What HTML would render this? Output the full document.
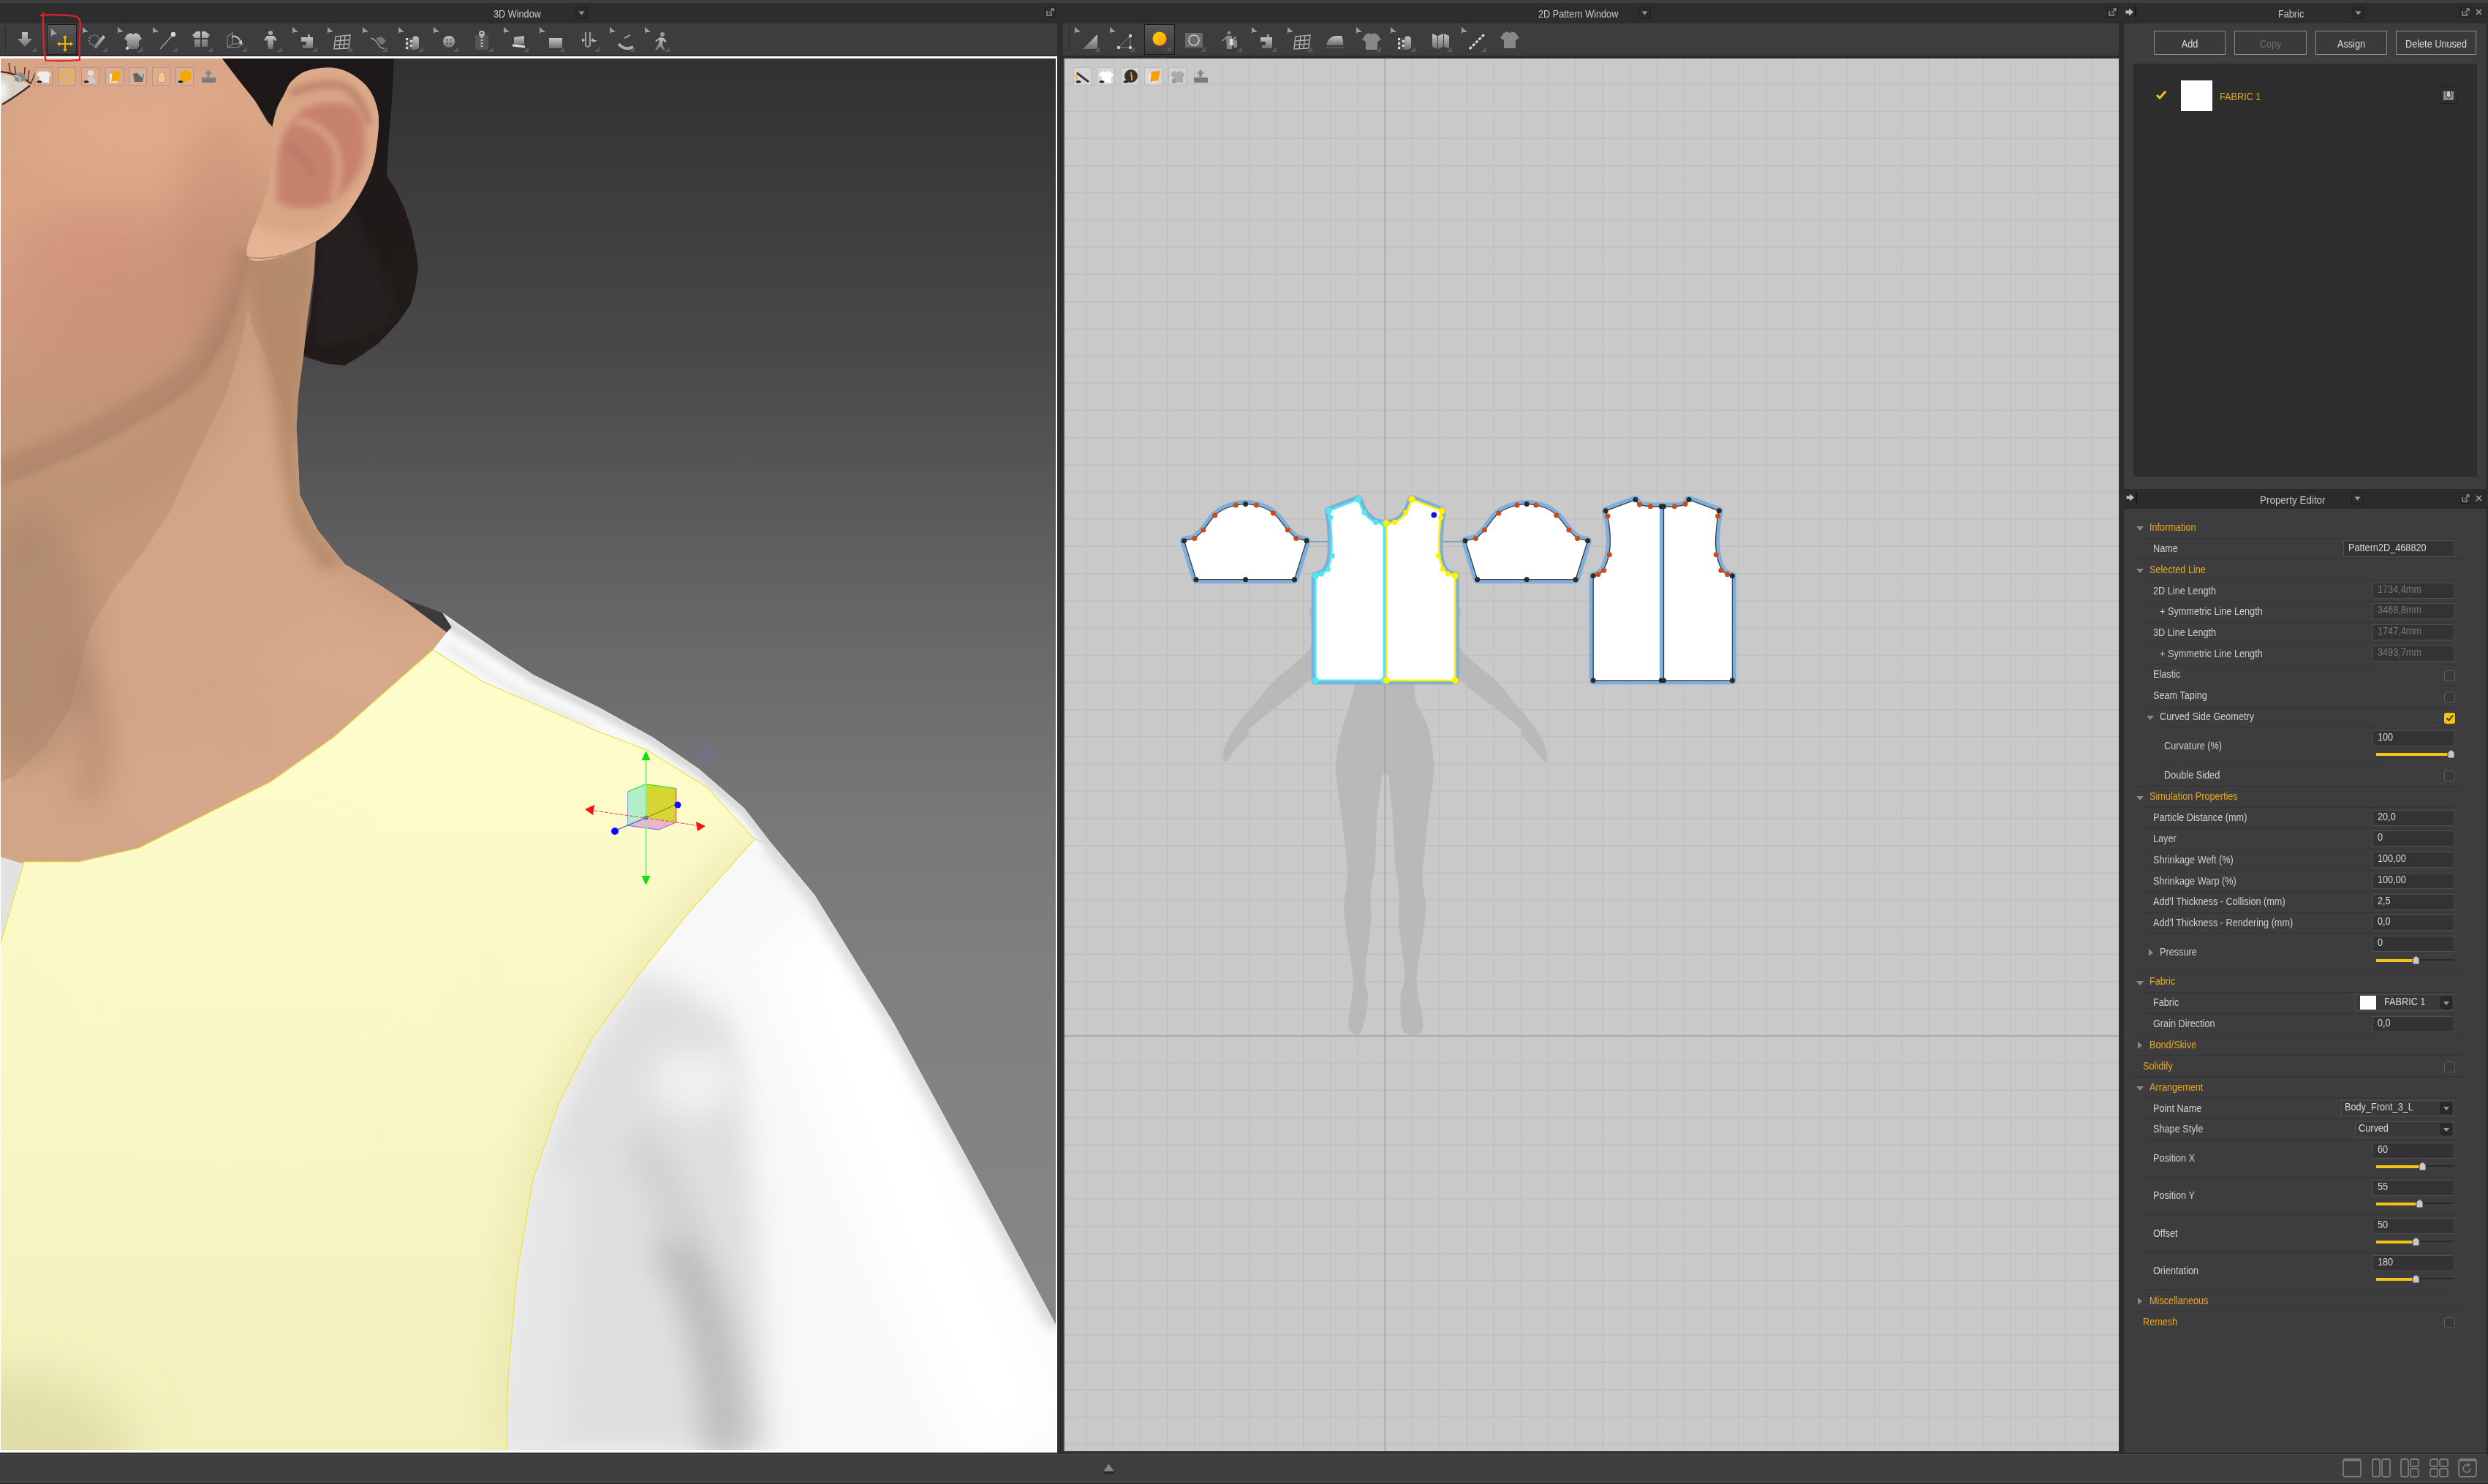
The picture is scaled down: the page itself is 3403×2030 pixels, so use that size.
<!DOCTYPE html>
<html><head><meta charset="utf-8">
<style>
*{box-sizing:border-box}
html,body{margin:0;padding:0;background:#3e3e40}
body{width:3403px;height:2030px;position:relative;overflow:hidden;background:#3e3e40;font-family:"Liberation Sans",sans-serif;color:#d0d0d0}
.a{position:absolute}
.t{position:absolute;white-space:nowrap;line-height:1}
</style></head><body>
<!-- top strip + title bar -->
<div class="a" style="left:0;top:0;width:3403px;height:4px;background:#3e3e40"></div>
<div class="a" style="left:0;top:4px;width:3403px;height:28px;background:#2d2d2d"></div>
<!-- toolbars -->
<div class="a" style="left:0;top:32px;width:1446px;height:44px;background:#3d3d3f"></div>
<div class="a" style="left:1446px;top:32px;width:8px;height:1958px;background:#2d2d2d"></div>
<div class="a" style="left:1454px;top:32px;width:1447px;height:44px;background:#3d3d3f"></div>
<div class="a" style="left:2898px;top:32px;width:7px;height:1958px;background:#2d2d2d"></div>
<div class="a" style="left:0;top:76px;width:1446px;height:1px;background:#1a1a1a"></div>
<div class="a" style="left:1454px;top:76px;width:1444px;height:4px;background:#2d2d2d"></div>
<!-- status bar -->
<div class="a" style="left:0;top:1987px;width:3403px;height:2px;background:#2e2e30"></div>
<div class="a" style="left:0;top:1989px;width:3403px;height:1px;background:#4a4a4a"></div>
<div class="a" style="left:0;top:2026px;width:3403px;height:2px;background:#484848"></div>
<div class="a" style="left:0;top:2028px;width:3403px;height:2px;background:#2e2e30"></div>

<!--3D-->
<div id="v3d" class="a" style="left:0;top:77px;width:1446px;height:1910px;background:#fff;overflow:hidden">
<svg class="a" style="left:1px;top:3px" width="1443" height="1904" viewBox="1 80 1443 1904">
<defs>
<linearGradient id="bg3" x1="0" y1="80" x2="0" y2="1984" gradientUnits="userSpaceOnUse">
<stop offset="0" stop-color="#313133"/><stop offset="0.22" stop-color="#4a4a4c"/><stop offset="0.40" stop-color="#666668"/><stop offset="0.536" stop-color="#77777a"/><stop offset="0.667" stop-color="#808083"/><stop offset="0.85" stop-color="#858588"/><stop offset="1" stop-color="#88888a"/></linearGradient>
<linearGradient id="face" x1="0" y1="100" x2="250" y2="640" gradientUnits="userSpaceOnUse">
<stop offset="0" stop-color="#d6a486"/><stop offset="0.3" stop-color="#daa486"/><stop offset="0.7" stop-color="#c6967a"/><stop offset="1" stop-color="#c29474"/></linearGradient>
<linearGradient id="neck" x1="0" y1="560" x2="600" y2="1000" gradientUnits="userSpaceOnUse">
<stop offset="0" stop-color="#bf9577"/><stop offset="0.45" stop-color="#c6997b"/><stop offset="1" stop-color="#d0a084"/></linearGradient>
<linearGradient id="yel" x1="0" y1="880" x2="0" y2="1984" gradientUnits="userSpaceOnUse">
<stop offset="0" stop-color="#fefdcc"/><stop offset="0.5" stop-color="#f9f7c4"/><stop offset="1" stop-color="#f2f0bc"/></linearGradient>
<linearGradient id="hairg" x1="0" y1="80" x2="0" y2="500" gradientUnits="userSpaceOnUse">
<stop offset="0" stop-color="#1c1817"/><stop offset="1" stop-color="#221c1a"/></linearGradient>
<filter id="bl20" filterUnits="userSpaceOnUse" x="0" y="0" width="1500" height="2100"><feGaussianBlur stdDeviation="20"/></filter>
<filter id="bl40" filterUnits="userSpaceOnUse" x="0" y="0" width="1500" height="2100"><feGaussianBlur stdDeviation="40"/></filter>
<filter id="bl8" filterUnits="userSpaceOnUse" x="0" y="0" width="1500" height="2100"><feGaussianBlur stdDeviation="8"/></filter>
<filter id="bl4" filterUnits="userSpaceOnUse" x="0" y="0" width="1500" height="2100"><feGaussianBlur stdDeviation="4"/></filter>
</defs>
<rect x="1" y="80" width="1443" height="1904" fill="url(#bg3)"/>
<path d="M296.0,78.0 L539.0,78.0 L536.0,137.6 L531.0,200.0 L529.0,241.0 L540.0,257.0 L554.0,287.0 L563.0,314.5 L570.0,349.0 L572.0,365.0 L567.8,394.6 L561.0,417.5 L545.0,440.4 L517.4,470.0 L494.5,486.0 L471.6,500.0 L448.7,497.7 L425.8,490.8 L412.0,486.0 L423.5,440.4 L430.0,383.0 L432.7,330.5 L380.0,300.0 L372.4,173.4 L348.5,137.6 L325.0,108.0Z" fill="url(#hairg)"/>
<path d="M440,240 Q500,300 540,420 Q520,470 430,470 Z" fill="#2b2828" opacity="0.5" filter="url(#bl8)"/>
<path d="M560,380 Q520,420 440,430 M566,350 Q520,395 445,405 M550,430 Q500,465 430,465" stroke="#2e2522" stroke-width="1.5" fill="none" opacity="0.6"/>
<clipPath id="cpSkin"><path d="M1.0,78.0 L302.0,78.0 L325.0,108.0 L348.5,137.6 L366.0,167.0 L372.4,173.4 L380.0,300.0 L432.0,328.0 L429.0,376.0 L420.0,440.0 L415.0,488.0 L408.0,540.0 L405.6,583.0 L410.0,677.0 L434.0,724.6 L471.7,771.7 L519.0,800.0 L548.0,819.0 L605.0,838.0 L618.0,858.0 L611.0,865.0 L592.0,889.0 L457.0,1008.0 L371.0,1069.0 L190.0,1160.0 L108.0,1179.0 L30.0,1181.0 L1.0,1172.0Z"/></clipPath>
<g clip-path="url(#cpSkin)">
<rect x="1" y="78" width="640" height="1110" fill="url(#neck)"/>
<path d="M339.6,418.0 L330.0,470.0 L311.0,535.8 L264.0,630.0 L232.8,700.0 L194.0,758.0 L155.0,806.7 L122.9,861.7 L106.7,926.0 L97.0,968.0 L64.7,1017.0 L19.4,1062.0 L1.0,1068.6 L1.0,1190.0 L640.0,1190.0 L640.0,640.0 L401.0,606.0 L372.5,512.0 L344.0,441.5Z" fill="#d6a78a" opacity="0.8"/>
<path d="M432,328 L429,376 L420,440 L415,488 L408,540 L405.6,583 L410,677 L434,724.6 L471.7,771.7 L440,780 L400,720 L385,640 L375,560 L360,480 L345,400 L340,340 Z" fill="#b08868" opacity="0.75" filter="url(#bl8)"/>
<ellipse cx="470" cy="930" rx="120" ry="80" fill="#dcac90" opacity="0.5" filter="url(#bl40)"/>
<ellipse cx="300" cy="1080" rx="200" ry="70" fill="#d8aa8e" opacity="0.5" filter="url(#bl40)"/>
<path d="M1,670 L126,640 L251,550 L320,430 L350,430 L320,560 L250,660 L120,720 L1,760 Z" fill="#ad866c" opacity="0.25" filter="url(#bl20)"/>
<path d="M100,900 Q125,960 132,1000 Q130,1050 118,1095" stroke="#9c765e" stroke-width="30" fill="none" opacity="0.55" filter="url(#bl20)"/>
<ellipse cx="40" cy="880" rx="90" ry="170" fill="#a08068" opacity="0.45" filter="url(#bl20)"/>
<path d="M380,400 Q400,600 470,760 Q520,810 560,820" stroke="#b3876c" stroke-width="30" fill="none" opacity="0.35" filter="url(#bl20)"/>
<path d="M1.0,78.0 C51.2,78.0 248.0,73.0 302.0,78.0 C356.0,83.0 317.2,98.1 325.0,108.0 C332.8,117.9 341.7,127.8 348.5,137.6 C355.3,147.4 362.0,161.0 366.0,167.0 C370.0,173.0 371.3,165.9 372.4,173.4 C373.5,180.9 373.4,198.1 372.4,212.0 C371.4,225.9 369.4,243.4 366.4,256.8 C363.4,270.2 359.0,280.1 354.5,292.5 C350.0,304.9 342.6,321.4 339.6,331.3 C336.6,341.2 338.5,342.2 336.6,352.0 C334.7,361.8 332.1,375.3 328.0,390.0 C323.9,404.7 317.8,425.0 312.0,440.0 C306.2,455.0 300.0,467.5 293.0,480.0 C286.0,492.5 280.8,503.5 270.0,515.0 C259.2,526.5 244.7,537.7 228.0,549.0 C211.3,560.3 189.2,572.2 170.0,583.0 C150.8,593.8 131.9,604.8 113.0,613.6 C94.1,622.4 75.3,628.3 56.6,636.0 C37.9,643.7 10.3,656.0 1.0,660.0Z" fill="url(#face)"/>
<ellipse cx="150" cy="380" rx="140" ry="120" fill="#d08c78" opacity="0.45" filter="url(#bl40)"/>
<ellipse cx="210" cy="190" rx="170" ry="90" fill="#e6ae90" opacity="0.55" filter="url(#bl40)"/>
<path d="M332.6,338.0 C331.2,344.3 328.1,361.3 324.0,376.0 C319.9,390.7 313.8,411.0 308.0,426.0 C302.2,441.0 296.0,453.5 289.0,466.0 C282.0,478.5 276.8,489.5 266.0,501.0 C255.2,512.5 240.7,523.7 224.0,535.0 C207.3,546.3 185.2,558.2 166.0,569.0 C146.8,579.8 127.9,590.8 109.0,599.6 C90.1,608.4 71.3,614.3 52.6,622.0 C33.9,629.7 6.3,642.0 -3.0,646.0" stroke="#a07a60" stroke-width="30" fill="none" opacity="0.45" filter="url(#bl8)"/>
<path d="M336.6,352.0 C335.2,358.3 332.1,375.3 328.0,390.0 C323.9,404.7 317.8,425.0 312.0,440.0 C306.2,455.0 300.0,467.5 293.0,480.0 C286.0,492.5 280.8,503.5 270.0,515.0 C259.2,526.5 244.7,537.7 228.0,549.0 C211.3,560.3 189.2,572.2 170.0,583.0 C150.8,593.8 131.9,604.8 113.0,613.6 C94.1,622.4 75.3,628.3 56.6,636.0 C37.9,643.7 10.3,656.0 1.0,660.0" stroke="#8a6650" stroke-width="3" fill="none" opacity="0.6" filter="url(#bl4)"/>
<ellipse cx="300" cy="300" rx="60" ry="140" fill="#c08a70" opacity="0.35" filter="url(#bl20)"/>
</g>
<clipPath id="cpEar"><path d="M372.4,173.0 C373.4,169.1 375.8,156.4 378.3,149.5 C380.8,142.6 383.8,138.0 387.3,131.6 C390.8,125.1 393.2,116.8 399.2,110.8 C405.1,104.8 412.1,98.6 423.0,95.9 C433.9,93.2 451.8,90.9 464.7,94.4 C477.6,97.9 491.8,107.0 500.5,116.7 C509.2,126.4 514.4,139.1 516.9,152.5 C519.4,165.9 517.1,183.3 515.4,197.2 C513.7,211.1 511.0,223.6 506.5,236.0 C502.0,248.4 495.6,260.3 488.6,271.7 C481.6,283.1 473.6,295.1 464.7,304.5 C455.8,313.9 445.9,321.4 435.0,328.3 C424.1,335.2 412.1,341.5 399.2,346.2 C386.3,350.9 367.4,355.6 357.5,356.6 C347.6,357.6 342.6,356.3 339.6,352.1 C336.6,347.9 337.1,341.2 339.6,331.3 C342.1,321.4 350.0,304.9 354.5,292.5 C359.0,280.1 363.4,270.2 366.4,256.8 C369.4,243.4 371.4,219.5 372.4,212.0Z"/></clipPath>
<path d="M372.4,173.0 C373.4,169.1 375.8,156.4 378.3,149.5 C380.8,142.6 383.8,138.0 387.3,131.6 C390.8,125.1 393.2,116.8 399.2,110.8 C405.1,104.8 412.1,98.6 423.0,95.9 C433.9,93.2 451.8,90.9 464.7,94.4 C477.6,97.9 491.8,107.0 500.5,116.7 C509.2,126.4 514.4,139.1 516.9,152.5 C519.4,165.9 517.1,183.3 515.4,197.2 C513.7,211.1 511.0,223.6 506.5,236.0 C502.0,248.4 495.6,260.3 488.6,271.7 C481.6,283.1 473.6,295.1 464.7,304.5 C455.8,313.9 445.9,321.4 435.0,328.3 C424.1,335.2 412.1,341.5 399.2,346.2 C386.3,350.9 367.4,355.6 357.5,356.6 C347.6,357.6 342.6,356.3 339.6,352.1 C336.6,347.9 337.1,341.2 339.6,331.3 C342.1,321.4 350.0,304.9 354.5,292.5 C359.0,280.1 363.4,270.2 366.4,256.8 C369.4,243.4 371.4,219.5 372.4,212.0Z" fill="#d8a585"/>
<g clip-path="url(#cpEar)">
<path d="M338,300 Q380,330 430,318 Q470,300 500,250 L530,260 L530,380 L320,380 Z" fill="#e4b494" filter="url(#bl8)"/>
<path d="M380,215 Q385,175 415,150 Q455,130 490,150 Q505,185 495,225 Q480,262 445,280 Q405,292 378,275 Z" fill="#c7826e" filter="url(#bl4)"/>
<path d="M398,128 Q440,110 470,118 Q497,135 505,170" stroke="#b97a68" stroke-width="10" fill="none" opacity="0.8" filter="url(#bl4)"/>
<path d="M405,165 Q445,170 460,205 Q468,240 455,270" stroke="#dba88a" stroke-width="9" fill="none" opacity="0.85" filter="url(#bl4)"/>
<path d="M392,200 Q420,210 428,245" stroke="#b47262" stroke-width="8" fill="none" opacity="0.6" filter="url(#bl4)"/>
<path d="M385,112 Q430,92 475,100 Q512,120 518,170 Q518,230 495,270 Q465,312 425,330" stroke="#deac8e" stroke-width="9" fill="none" filter="url(#bl4)"/>
</g>
<path d="M338,352 Q380,358 430,332" stroke="#9a6e58" stroke-width="1.5" fill="none" opacity="0.6"/>
<path d="M1,100 L16,104 L41,116 L31,127 L16,137 L1,144 Z" fill="#d8d0c6"/>
<ellipse cx="3" cy="125" rx="6" ry="14" fill="#ffffff" opacity="0.9" filter="url(#bl4)"/>
<path d="M1,98 Q25,100 42,114" stroke="#3a2420" stroke-width="2" fill="none"/>
<path d="M3,143 Q25,130 41,117" stroke="#4a2a24" stroke-width="2.5" fill="none"/>
<path d="M12,86 L14,100 M20,90 L22,103 M34,92 L33,108 M40,96 L38,111 M48,100 L42,115" stroke="#4a3028" stroke-width="1.4"/>
<path d="M520,797 L548,818 L605,838 L618,858 L611,865 Z" fill="#3b3b3d"/>
<clipPath id="cpWhite"><path d="M605.0,838.0 L684.0,893.0 L729.5,923.0 L820.0,968.0 L893.6,1009.0 L956.0,1051.7 L1018.0,1105.5 L1055.0,1153.6 L1114.0,1224.0 L1222.0,1399.0 L1329.5,1597.0 L1444.0,1812.0 L1444.0,1984.0 L692.5,1984.0 L695.0,1886.0 L706.6,1745.0 L729.0,1614.0 L763.0,1512.0 L808.5,1422.0 L871.0,1337.0 L939.0,1252.0 L1032.0,1148.0 L967.0,1077.0 L885.0,1026.0 L811.5,998.0 L726.6,961.0 L661.5,933.0 L592.0,889.0 L611.0,865.0 L618.0,858.0Z"/></clipPath>
<g clip-path="url(#cpWhite)">
<rect x="580" y="830" width="870" height="1160" fill="#f8f8f8"/>
<path d="M600,845 L684,897 L729,927 L820,972 L894,1013 L956,1056 L1018,1110 L1055,1158 L1114,1228 L1222,1403 L1330,1601 L1444,1816" stroke="#d6d6d6" stroke-width="12" fill="none" filter="url(#bl4)"/>
<path d="M610,884 L680,929 L730,958 L810,995" stroke="#e6e6e6" stroke-width="6" fill="none" filter="url(#bl4)"/>
<path d="M873,1330 L930,1352 L1000,1395 L1022,1547 L1036,1695 L1046,1843 L1056,1990 L680,1990 L695,1886 L707,1745 L729,1614 L763,1512 L808,1422 L850,1365 Z" fill="#dfdfdf" filter="url(#bl20)"/>
<ellipse cx="950" cy="1480" rx="60" ry="45" fill="#f0f0f0" filter="url(#bl20)"/>
<path d="M760,1600 Q740,1800 730,1990" stroke="#e8e8e8" stroke-width="60" fill="none" filter="url(#bl20)"/>
<path d="M915,1690 Q960,1760 975,1840 Q990,1910 995,1990" stroke="#bdbdbd" stroke-width="62" fill="none" filter="url(#bl20)"/>
<path d="M870,1560 Q920,1620 935,1700" stroke="#d0d0d0" stroke-width="50" fill="none" filter="url(#bl20)"/>
<path d="M1120,1260 Q1230,1600 1400,1990" stroke="#ffffff" stroke-width="170" fill="none" filter="url(#bl40)"/>
<path d="M1055,1153.6 L1114,1224 L1222,1399 L1329.5,1597 L1444,1812" stroke="#dedede" stroke-width="26" fill="none" filter="url(#bl8)"/>
</g>
<clipPath id="cpYel"><path d="M592.0,889.0 L661.5,933.0 L726.6,961.0 L811.5,998.0 L885.0,1026.0 L967.0,1077.0 L1032.0,1148.0 L939.0,1252.0 L871.0,1337.0 L808.5,1422.0 L763.0,1512.0 L729.0,1614.0 L706.6,1745.0 L695.0,1886.0 L692.5,1984.0 L1.0,1984.0 L1.0,1290.0 L33.0,1179.0 L108.0,1179.0 L190.0,1160.0 L371.0,1069.0 L457.0,1008.0Z"/></clipPath>
<g clip-path="url(#cpYel)">
<rect x="1" y="860" width="1050" height="1130" fill="url(#yel)"/>
<ellipse cx="10" cy="1990" rx="170" ry="110" fill="#d8d4a0" opacity="0.7" filter="url(#bl40)"/>
<path d="M1032,1148 L939,1252 L871,1337 L808.5,1422 L763,1512 L729,1614 L706.6,1745 L695,1886 L692.5,1984" stroke="#e4e0aa" stroke-width="40" fill="none" opacity="0.55" filter="url(#bl20)"/>
<ellipse cx="350" cy="1350" rx="300" ry="200" fill="#fbfac8" opacity="0.4" filter="url(#bl40)"/>
</g>
<path d="M1,1172 L30,1181 L33,1179 L1,1290 Z" fill="#e2e2e2"/>
<path d="M1.0,1290.0 L33.0,1179.0 L108.0,1179.0 L190.0,1160.0 L371.0,1069.0 L457.0,1008.0 L592.0,889.0 L661.5,933.0 L726.6,961.0 L811.5,998.0 L885.0,1026.0 L967.0,1077.0 L1032.0,1148.0 L939.0,1252.0 L871.0,1337.0 L808.5,1422.0 L763.0,1512.0 L729.0,1614.0 L706.6,1745.0 L695.0,1886.0 L692.5,1984.0" stroke="#ebe33a" stroke-width="1.1" fill="none"/>
<path d="M1032,1148 L1055,1153.6" stroke="#d8d8d8" stroke-width="1.5"/>
<g>
<path d="M858.6,1083 L883.5,1072.6 L883.5,1118.6 L858.6,1129.3 Z" fill="#aeeec8" opacity="0.95"/>
<path d="M883.5,1072.6 L924.6,1078.6 L924.6,1125 L883.5,1118.6 Z" fill="#d4d42a" opacity="0.95"/>
<path d="M858.6,1129.3 L883.5,1118.6 L924.6,1125 L900.8,1135 Z" fill="#eab2cc" opacity="0.95"/>
<path d="M858.6,1129.3 L858.6,1083" stroke="#7f9fef" stroke-width="1"/>
<path d="M858.6,1083 L883.5,1072.6 L924.6,1078.6" stroke="#30e030" stroke-width="1.2" fill="none"/>
<path d="M883.5,1072.6 L883.5,1118.6 M924.6,1078.6 L924.6,1125" stroke="#e84040" stroke-width="1"/>
<path d="M858.6,1129.3 L900.8,1135 L924.6,1125" stroke="#6a6af0" stroke-width="1" fill="none"/>
<line x1="883.5" y1="1036" x2="883.5" y2="1202" stroke="#86f086" stroke-width="2"/>
<line x1="806" y1="1108" x2="960" y2="1130" stroke="#e84040" stroke-width="1" stroke-dasharray="5,2"/>
<line x1="883.5" y1="1118.6" x2="842" y2="1136" stroke="#5050ff" stroke-width="1.2"/>
<line x1="883.5" y1="1118.6" x2="926" y2="1100" stroke="#505040" stroke-width="1" opacity="0.7"/>
<path d="M883.5,1027 L877.5,1040 L889.5,1040 Z M883.5,1211 L877.5,1198 L889.5,1198 Z" fill="#10e010"/>
<path d="M800,1107 L813,1101 L811,1115 Z M965,1130 L952,1124 L954,1137 Z" fill="#ff1010"/>
<circle cx="883.6" cy="1118.6" r="2.5" fill="none" stroke="#303090" stroke-width="1" opacity="0.8"/>
<circle cx="841" cy="1137" r="5" fill="#0a0aff"/>
<circle cx="927" cy="1101" r="4.5" fill="#0a0aff"/>
<circle cx="967.5" cy="1029" r="8" fill="none" stroke="#7070c0" stroke-width="2" opacity="0.6"/>
<path d="M955,1029 H980 M967.5,1016 V1042" stroke="#7070c0" stroke-width="1.5" opacity="0.6"/>
</g>
</svg>
</div>

<!--2D-->
<div id="v2d" class="a" style="left:1455px;top:80px;width:1443px;height:1905px;background:#c8c8c8;overflow:hidden">
<svg class="a" style="left:0;top:0" width="1443" height="1905" viewBox="1455 80 1443 1905">
<rect x="1455" y="80" width="1443" height="1905" fill="#c9c9c9"/>
<path d="M1485.2,80V1985M1522.4,80V1985M1559.6,80V1985M1596.8,80V1985M1634.0,80V1985M1671.2,80V1985M1708.4,80V1985M1745.6,80V1985M1782.8,80V1985M1820.0,80V1985M1857.2,80V1985M1894.4,80V1985M1931.6,80V1985M1968.8,80V1985M2006.0,80V1985M2043.2,80V1985M2080.4,80V1985M2117.6,80V1985M2154.8,80V1985M2192.0,80V1985M2229.2,80V1985M2266.4,80V1985M2303.6,80V1985M2340.8,80V1985M2378.0,80V1985M2415.2,80V1985M2452.4,80V1985M2489.6,80V1985M2526.8,80V1985M2564.0,80V1985M2601.2,80V1985M2638.4,80V1985M2675.6,80V1985M2712.8,80V1985M2750.0,80V1985M2787.2,80V1985M2824.4,80V1985M2861.6,80V1985M1455,115.0H2898M1455,152.2H2898M1455,189.4H2898M1455,226.6H2898M1455,263.8H2898M1455,301.0H2898M1455,338.2H2898M1455,375.4H2898M1455,412.6H2898M1455,449.8H2898M1455,487.0H2898M1455,524.2H2898M1455,561.4H2898M1455,598.6H2898M1455,635.8H2898M1455,673.0H2898M1455,710.2H2898M1455,747.4H2898M1455,784.6H2898M1455,821.8H2898M1455,859.0H2898M1455,896.2H2898M1455,933.4H2898M1455,970.6H2898M1455,1007.8H2898M1455,1045.0H2898M1455,1082.2H2898M1455,1119.4H2898M1455,1156.6H2898M1455,1193.8H2898M1455,1231.0H2898M1455,1268.2H2898M1455,1305.4H2898M1455,1342.6H2898M1455,1379.8H2898M1455,1417.0H2898M1455,1454.2H2898M1455,1491.4H2898M1455,1528.6H2898M1455,1565.8H2898M1455,1603.0H2898M1455,1640.2H2898M1455,1677.4H2898M1455,1714.6H2898M1455,1751.8H2898M1455,1789.0H2898M1455,1826.2H2898M1455,1863.4H2898M1455,1900.6H2898M1455,1937.8H2898M1455,1975.0H2898" stroke="#bdbdbd" stroke-width="1" fill="none"/>
<path d="M1852.7,904.3 C1852.7,910.0 1853.7,929.2 1852.7,938.6 C1851.7,948.1 1850.0,949.1 1846.7,960.9 C1843.3,972.7 1835.7,994.6 1832.5,1009.4 C1829.3,1024.2 1827.3,1035.0 1827.3,1049.8 C1827.3,1064.7 1830.3,1079.5 1832.5,1098.4 C1834.7,1117.2 1838.9,1145.5 1840.6,1163.1 C1842.3,1180.6 1843.0,1191.4 1842.6,1203.5 C1842.3,1215.6 1838.9,1225.1 1838.6,1235.8 C1838.2,1246.6 1838.6,1250.7 1840.6,1268.2 C1842.6,1285.7 1850.0,1320.1 1850.7,1341.0 C1851.4,1361.9 1845.3,1382.1 1844.6,1393.5 C1844.0,1405.0 1844.0,1406.4 1846.7,1409.7 C1849.4,1413.1 1856.8,1420.5 1860.8,1413.8 C1864.9,1407.0 1869.9,1382.8 1870.9,1369.3 C1871.9,1355.8 1866.2,1350.4 1866.9,1332.9 C1867.6,1315.4 1873.6,1283.0 1875.0,1264.1 C1876.3,1245.3 1874.0,1233.8 1875.0,1219.7 C1876.0,1205.5 1879.7,1195.4 1881.0,1179.2 C1882.4,1163.1 1881.7,1140.8 1883.1,1122.6 C1884.4,1104.4 1887.8,1080.5 1889.1,1070.1 C1890.5,1059.6 1889.6,1061.6 1891.1,1059.9 C1892.7,1058.3 1896.7,1056.2 1898.4,1059.9 C1900.1,1063.7 1900.1,1071.7 1901.3,1082.2 C1902.4,1092.6 1904.2,1106.4 1905.3,1122.6 C1906.4,1138.8 1906.8,1163.1 1908.1,1179.2 C1909.5,1195.4 1912.5,1205.5 1913.4,1219.7 C1914.3,1233.8 1912.0,1245.3 1913.4,1264.1 C1914.7,1283.0 1921.1,1316.0 1921.5,1332.9 C1921.8,1349.7 1915.7,1352.4 1915.4,1365.2 C1915.1,1378.0 1915.1,1401.6 1919.5,1409.7 C1923.8,1417.8 1937.3,1416.5 1941.7,1413.8 C1946.1,1411.1 1946.4,1405.7 1945.7,1393.5 C1945.1,1381.4 1937.3,1361.9 1937.6,1341.0 C1938.0,1320.1 1945.7,1285.7 1947.8,1268.2 C1949.8,1250.7 1950.1,1246.6 1949.8,1235.8 C1949.4,1225.1 1945.9,1215.6 1945.7,1203.5 C1945.5,1191.4 1946.9,1180.6 1948.6,1163.1 C1950.2,1145.5 1953.8,1117.2 1955.8,1098.4 C1957.9,1079.5 1961.4,1066.7 1961.1,1049.8 C1960.8,1033.0 1957.7,1012.1 1953.8,997.3 C1949.9,982.4 1940.8,970.6 1937.6,960.9 C1934.5,951.1 1935.3,948.1 1934.8,938.6 C1934.3,929.2 1934.8,910.0 1934.8,904.3Z" fill="#b9b9b9"/>
<path d="M1790.1,831.5 C1790.7,839.6 1797.5,867.2 1794.1,880.0 C1790.7,892.8 1778.6,899.5 1769.8,908.3 C1761.1,917.1 1750.3,923.8 1741.5,932.6 C1732.8,941.3 1724.7,952.1 1717.3,960.9 C1709.9,969.6 1703.1,977.0 1697.0,985.1 C1691.0,993.2 1684.9,1002.0 1680.9,1009.4 C1676.8,1016.8 1673.8,1024.2 1672.8,1029.6 C1671.8,1035.0 1673.8,1040.1 1674.8,1041.7 C1675.8,1043.4 1675.8,1043.1 1678.9,1039.7 C1681.9,1036.4 1688.3,1027.3 1693.0,1021.5 C1697.7,1015.8 1704.5,1009.4 1707.2,1005.4 C1709.9,1001.3 1704.1,1002.7 1709.2,997.3 C1714.2,991.9 1727.4,981.1 1737.5,973.0 C1747.6,964.9 1759.7,956.8 1769.8,948.7 C1779.9,940.7 1790.7,931.9 1798.1,924.5 C1805.6,917.1 1809.6,911.7 1814.3,904.3 C1819.0,896.8 1823.1,892.1 1826.4,880.0 C1829.8,867.9 1833.2,839.6 1834.5,831.5Z" fill="#b9b9b9"/>
<path d="M1998.7,831.5 C1998.1,839.6 1991.3,867.2 1994.7,880.0 C1998.1,892.8 2010.2,899.5 2019.0,908.3 C2027.7,917.1 2038.5,923.8 2047.3,932.6 C2056.0,941.3 2064.1,952.1 2071.5,960.9 C2078.9,969.6 2085.7,977.0 2091.8,985.1 C2097.8,993.2 2103.9,1002.0 2107.9,1009.4 C2112.0,1016.8 2115.0,1024.2 2116.0,1029.6 C2117.0,1035.0 2115.0,1040.1 2114.0,1041.7 C2113.0,1043.4 2113.0,1043.1 2109.9,1039.7 C2106.9,1036.4 2100.5,1027.3 2095.8,1021.5 C2091.1,1015.8 2084.3,1009.4 2081.6,1005.4 C2078.9,1001.3 2084.7,1002.7 2079.6,997.3 C2074.6,991.9 2061.4,981.1 2051.3,973.0 C2041.2,964.9 2029.1,956.8 2019.0,948.7 C2008.9,940.7 1998.1,931.9 1990.7,924.5 C1983.2,917.1 1979.2,911.7 1974.5,904.3 C1969.8,896.8 1965.7,892.1 1962.4,880.0 C1959.0,867.9 1955.6,839.6 1954.3,831.5Z" fill="#b9b9b9"/>
<path d="M1894.4,80V1985M1455,1417.0H2898" stroke="#939393" stroke-width="1.1" fill="none"/>
<path d="M1787,741H1822M1967,741H2005" stroke="#6f90b3" stroke-width="1.4"/>
<path d="M1619.6,739.7 L1634.4,736.4 C1636.3,734.5 1641.4,730.4 1645.9,725.1 C1650.5,719.9 1656.2,710.2 1661.7,705.0 C1667.2,699.9 1671.9,697.1 1678.9,694.5 C1685.9,691.9 1695.4,689.6 1703.6,689.6 C1711.8,689.6 1721.5,691.9 1728.3,694.5 C1735.2,697.1 1739.3,699.9 1744.8,705.0 C1750.3,710.2 1756.6,719.9 1761.3,725.1 C1765.9,730.4 1770.9,734.5 1772.8,736.4 L1787.0,739.7 L1770.5,792.7 L1636.0,792.7Z" fill="none" stroke="#7eaedb" stroke-width="11" stroke-linejoin="round"/><path d="M1619.6,739.7 L1634.4,736.4 C1636.3,734.5 1641.4,730.4 1645.9,725.1 C1650.5,719.9 1656.2,710.2 1661.7,705.0 C1667.2,699.9 1671.9,697.1 1678.9,694.5 C1685.9,691.9 1695.4,689.6 1703.6,689.6 C1711.8,689.6 1721.5,691.9 1728.3,694.5 C1735.2,697.1 1739.3,699.9 1744.8,705.0 C1750.3,710.2 1756.6,719.9 1761.3,725.1 C1765.9,730.4 1770.9,734.5 1772.8,736.4 L1787.0,739.7 L1770.5,792.7 L1636.0,792.7Z" fill="#ffffff" stroke="#3a3a3a" stroke-width="1.3" stroke-linejoin="round"/>
<circle cx="1619.6" cy="739.7" r="3.5" fill="#2b2b2b"/><circle cx="1703.6" cy="689.6" r="3.5" fill="#2b2b2b"/><circle cx="1787.0" cy="739.7" r="3.5" fill="#2b2b2b"/><circle cx="1770.5" cy="792.7" r="3.5" fill="#2b2b2b"/><circle cx="1636.0" cy="792.7" r="3.5" fill="#2b2b2b"/><circle cx="1703.6" cy="792.7" r="3.5" fill="#2b2b2b"/>
<circle cx="1633.7" cy="736.4" r="3.5" fill="#cf4a12"/><circle cx="1645.9" cy="725.1" r="3.5" fill="#cf4a12"/><circle cx="1661.7" cy="705.0" r="3.5" fill="#cf4a12"/><circle cx="1690.4" cy="690.9" r="3.5" fill="#cf4a12"/><circle cx="1718.4" cy="690.9" r="3.5" fill="#cf4a12"/><circle cx="1741.5" cy="702.1" r="3.5" fill="#cf4a12"/><circle cx="1761.3" cy="725.1" r="3.5" fill="#cf4a12"/><circle cx="1772.8" cy="736.4" r="3.5" fill="#cf4a12"/>
<path d="M2004.2,739.7 L2019.0,736.4 C2020.9,734.5 2026.0,730.4 2030.6,725.1 C2035.1,719.9 2040.9,710.2 2046.4,705.0 C2051.9,699.9 2056.5,697.1 2063.5,694.5 C2070.5,691.9 2080.0,689.6 2088.2,689.6 C2096.5,689.6 2106.1,691.9 2113.0,694.5 C2119.8,697.1 2123.9,699.9 2129.4,705.0 C2134.9,710.2 2141.3,719.9 2145.9,725.1 C2150.6,730.4 2155.5,734.5 2157.5,736.4 L2171.6,739.7 L2155.1,792.7 L2020.7,792.7Z" fill="none" stroke="#7eaedb" stroke-width="11" stroke-linejoin="round"/><path d="M2004.2,739.7 L2019.0,736.4 C2020.9,734.5 2026.0,730.4 2030.6,725.1 C2035.1,719.9 2040.9,710.2 2046.4,705.0 C2051.9,699.9 2056.5,697.1 2063.5,694.5 C2070.5,691.9 2080.0,689.6 2088.2,689.6 C2096.5,689.6 2106.1,691.9 2113.0,694.5 C2119.8,697.1 2123.9,699.9 2129.4,705.0 C2134.9,710.2 2141.3,719.9 2145.9,725.1 C2150.6,730.4 2155.5,734.5 2157.5,736.4 L2171.6,739.7 L2155.1,792.7 L2020.7,792.7Z" fill="#ffffff" stroke="#3a3a3a" stroke-width="1.3" stroke-linejoin="round"/>
<circle cx="2004.2" cy="739.7" r="3.5" fill="#2b2b2b"/><circle cx="2088.2" cy="689.6" r="3.5" fill="#2b2b2b"/><circle cx="2171.6" cy="739.7" r="3.5" fill="#2b2b2b"/><circle cx="2155.1" cy="792.7" r="3.5" fill="#2b2b2b"/><circle cx="2020.7" cy="792.7" r="3.5" fill="#2b2b2b"/><circle cx="2088.2" cy="792.7" r="3.5" fill="#2b2b2b"/>
<circle cx="2018.4" cy="736.4" r="3.5" fill="#cf4a12"/><circle cx="2030.6" cy="725.1" r="3.5" fill="#cf4a12"/><circle cx="2049.7" cy="702.1" r="3.5" fill="#cf4a12"/><circle cx="2075.1" cy="690.9" r="3.5" fill="#cf4a12"/><circle cx="2100.8" cy="690.9" r="3.5" fill="#cf4a12"/><circle cx="2128.8" cy="705.0" r="3.5" fill="#cf4a12"/><circle cx="2145.9" cy="725.1" r="3.5" fill="#cf4a12"/><circle cx="2157.5" cy="736.4" r="3.5" fill="#cf4a12"/>
<path d="M1817.3,698.8 L1857.9,683.0 C1859.2,686.0 1862.7,696.1 1866.1,701.1 C1869.5,706.0 1873.5,710.0 1878.3,712.6 C1883.1,715.3 1889.3,716.9 1894.8,716.9 C1900.3,716.9 1906.5,715.3 1911.2,712.6 C1916.0,710.0 1920.1,706.0 1923.4,701.1 C1926.7,696.1 1929.8,686.0 1931.0,683.0 L1972.2,698.8 C1971.8,701.6 1970.2,708.7 1969.6,715.9 C1968.9,723.2 1968.3,734.0 1968.3,742.3 C1968.3,750.5 1968.1,758.8 1969.6,765.4 C1971.1,772.0 1973.7,778.1 1977.2,781.8 C1980.6,785.6 1988.2,786.8 1990.3,787.8 L1990.3,930.8 L1799.2,930.8 L1799.2,787.8 C1801.4,786.8 1808.9,785.6 1812.4,781.8 C1815.8,778.1 1818.5,772.0 1819.9,765.4 C1821.4,758.8 1821.3,750.5 1821.3,742.3 C1821.3,734.0 1820.6,723.2 1819.9,715.9 C1819.3,708.7 1817.7,701.6 1817.3,698.8Z" fill="none" stroke="#7eaedb" stroke-width="11" stroke-linejoin="round"/>
<path d="M1817.3,698.8 L1857.9,683.0 C1859.2,686.0 1862.7,696.1 1866.1,701.1 C1869.5,706.0 1873.5,710.0 1878.3,712.6 C1883.1,715.3 1889.3,716.9 1894.8,716.9 C1900.3,716.9 1906.5,715.3 1911.2,712.6 C1916.0,710.0 1920.1,706.0 1923.4,701.1 C1926.7,696.1 1929.8,686.0 1931.0,683.0 L1972.2,698.8 C1971.8,701.6 1970.2,708.7 1969.6,715.9 C1968.9,723.2 1968.3,734.0 1968.3,742.3 C1968.3,750.5 1968.1,758.8 1969.6,765.4 C1971.1,772.0 1973.7,778.1 1977.2,781.8 C1980.6,785.6 1988.2,786.8 1990.3,787.8 L1990.3,930.8 L1799.2,930.8 L1799.2,787.8 C1801.4,786.8 1808.9,785.6 1812.4,781.8 C1815.8,778.1 1818.5,772.0 1819.9,765.4 C1821.4,758.8 1821.3,750.5 1821.3,742.3 C1821.3,734.0 1820.6,723.2 1819.9,715.9 C1819.3,708.7 1817.7,701.6 1817.3,698.8Z" fill="#ffffff"/>
<path d="M1894.8,716.9V930.8" stroke="#7eaedb" stroke-width="3"/>
<path d="M1817.3,698.8 L1857.9,683.0 C1859.2,686.0 1862.7,696.1 1866.1,701.1 C1869.5,706.0 1873.8,710.0 1878.3,712.6 C1882.8,715.3 1890.6,716.2 1893.1,716.9 L1893.1,930.8 L1799.2,930.8 L1799.2,787.8 C1801.4,786.8 1808.9,785.6 1812.4,781.8 C1815.8,778.1 1818.5,772.0 1819.9,765.4 C1821.4,758.8 1821.3,750.5 1821.3,742.3 C1821.3,734.0 1820.6,723.2 1819.9,715.9 C1819.3,708.7 1817.7,701.6 1817.3,698.8Z" fill="none" stroke="#52e6f2" stroke-width="2.8" stroke-linejoin="round"/>
<path d="M1896.4,716.9 L1896.4,930.8 L1990.3,930.8 L1990.3,787.8 C1988.2,786.8 1980.6,785.6 1977.2,781.8 C1973.7,778.1 1971.1,772.0 1969.6,765.4 C1968.1,758.8 1968.3,750.5 1968.3,742.3 C1968.3,734.0 1968.9,723.2 1969.6,715.9 C1970.2,708.7 1971.8,701.6 1972.2,698.8 L1931.0,683.0 C1929.8,686.0 1926.7,696.1 1923.4,701.1 C1920.1,706.0 1915.8,710.0 1911.2,712.6 C1906.7,715.3 1898.9,716.2 1896.4,716.9Z" fill="none" stroke="#fff200" stroke-width="2.8" stroke-linejoin="round"/>
<circle cx="1857.9" cy="683.0" r="4.6" fill="#52e6f2"/><circle cx="1817.3" cy="698.8" r="4.6" fill="#52e6f2"/><circle cx="1799.2" cy="787.8" r="4.6" fill="#52e6f2"/><circle cx="1799.2" cy="930.8" r="4.6" fill="#52e6f2"/><circle cx="1893.1" cy="930.8" r="4.6" fill="#52e6f2"/><circle cx="1893.1" cy="715.9" r="4.6" fill="#52e6f2"/>
<circle cx="1819.6" cy="707.7" r="3.6" fill="#52e6f2"/><circle cx="1866.1" cy="701.1" r="3.6" fill="#52e6f2"/><circle cx="1881.6" cy="714.3" r="3.6" fill="#52e6f2"/><circle cx="1822.3" cy="760.4" r="3.6" fill="#52e6f2"/><circle cx="1816.3" cy="778.5" r="3.6" fill="#52e6f2"/><circle cx="1807.4" cy="785.1" r="3.6" fill="#52e6f2"/>
<circle cx="1931.0" cy="683.0" r="4.6" fill="#fff200"/><circle cx="1972.2" cy="698.8" r="4.6" fill="#fff200"/><circle cx="1990.3" cy="787.8" r="4.6" fill="#fff200"/><circle cx="1990.3" cy="930.8" r="4.6" fill="#fff200"/><circle cx="1896.4" cy="930.8" r="4.6" fill="#fff200"/><circle cx="1896.4" cy="715.9" r="4.6" fill="#fff200"/>
<circle cx="1970.6" cy="707.7" r="3.6" fill="#fff200"/><circle cx="1922.8" cy="701.1" r="3.6" fill="#fff200"/><circle cx="1907.9" cy="714.3" r="3.6" fill="#fff200"/><circle cx="1967.3" cy="760.4" r="3.6" fill="#fff200"/><circle cx="1972.9" cy="778.5" r="3.6" fill="#fff200"/><circle cx="1980.5" cy="785.1" r="3.6" fill="#fff200"/>
<circle cx="1961.3" cy="704.4" r="3.8" fill="#0a14e6"/>
<path d="M2196.3,698.8 L2236.9,683.6 C2237.8,684.7 2239.1,688.7 2242.5,690.2 C2245.9,691.7 2252.4,692.4 2257.3,692.8 C2262.3,693.3 2269.7,692.8 2272.2,692.8 L2272.2,930.8 L2179.2,930.8 L2179.2,787.8 C2181.0,787.1 2186.6,786.7 2189.8,783.5 C2192.9,780.3 2195.9,775.0 2198.0,768.7 C2200.1,762.3 2201.8,754.4 2202.3,745.6 C2202.7,736.8 2201.6,723.7 2200.6,715.9 C2199.6,708.1 2197.1,701.6 2196.3,698.8Z" fill="none" stroke="#7eaedb" stroke-width="11" stroke-linejoin="round"/><path d="M2196.3,698.8 L2236.9,683.6 C2237.8,684.7 2239.1,688.7 2242.5,690.2 C2245.9,691.7 2252.4,692.4 2257.3,692.8 C2262.3,693.3 2269.7,692.8 2272.2,692.8 L2272.2,930.8 L2179.2,930.8 L2179.2,787.8 C2181.0,787.1 2186.6,786.7 2189.8,783.5 C2192.9,780.3 2195.9,775.0 2198.0,768.7 C2200.1,762.3 2201.8,754.4 2202.3,745.6 C2202.7,736.8 2201.6,723.7 2200.6,715.9 C2199.6,708.1 2197.1,701.6 2196.3,698.8Z" fill="#ffffff" stroke="#3a3a3a" stroke-width="1.3" stroke-linejoin="round"/>
<path d="M2275.5,692.8 L2275.5,930.8 L2369.4,930.8 L2369.4,787.8 C2367.6,787.1 2362.0,786.7 2358.8,783.5 C2355.7,780.3 2352.6,775.0 2350.6,768.7 C2348.6,762.3 2347.0,754.4 2346.6,745.6 C2346.3,736.8 2347.5,723.7 2348.3,715.9 C2349.1,708.1 2350.8,701.6 2351.3,698.8 L2310.1,683.6 C2309.2,684.7 2308.4,688.7 2305.1,690.2 C2301.8,691.7 2295.2,692.4 2290.3,692.8 C2285.3,693.3 2277.9,692.8 2275.5,692.8Z" fill="none" stroke="#7eaedb" stroke-width="11" stroke-linejoin="round"/><path d="M2275.5,692.8 L2275.5,930.8 L2369.4,930.8 L2369.4,787.8 C2367.6,787.1 2362.0,786.7 2358.8,783.5 C2355.7,780.3 2352.6,775.0 2350.6,768.7 C2348.6,762.3 2347.0,754.4 2346.6,745.6 C2346.3,736.8 2347.5,723.7 2348.3,715.9 C2349.1,708.1 2350.8,701.6 2351.3,698.8 L2310.1,683.6 C2309.2,684.7 2308.4,688.7 2305.1,690.2 C2301.8,691.7 2295.2,692.4 2290.3,692.8 C2285.3,693.3 2277.9,692.8 2275.5,692.8Z" fill="#ffffff" stroke="#3a3a3a" stroke-width="1.3" stroke-linejoin="round"/>
<circle cx="2196.3" cy="698.8" r="3.5" fill="#2b2b2b"/><circle cx="2236.9" cy="683.6" r="3.5" fill="#2b2b2b"/><circle cx="2272.2" cy="692.8" r="3.5" fill="#2b2b2b"/><circle cx="2275.5" cy="692.8" r="3.5" fill="#2b2b2b"/><circle cx="2179.2" cy="787.8" r="3.5" fill="#2b2b2b"/><circle cx="2179.2" cy="930.8" r="3.5" fill="#2b2b2b"/><circle cx="2272.2" cy="930.8" r="3.5" fill="#2b2b2b"/><circle cx="2275.5" cy="930.8" r="3.5" fill="#2b2b2b"/><circle cx="2310.1" cy="683.6" r="3.5" fill="#2b2b2b"/><circle cx="2351.3" cy="698.8" r="3.5" fill="#2b2b2b"/><circle cx="2369.4" cy="787.8" r="3.5" fill="#2b2b2b"/><circle cx="2369.4" cy="930.8" r="3.5" fill="#2b2b2b"/>
<circle cx="2242.5" cy="690.2" r="3.5" fill="#cf4a12"/><circle cx="2257.3" cy="692.8" r="3.5" fill="#cf4a12"/><circle cx="2199.0" cy="706.0" r="3.5" fill="#cf4a12"/><circle cx="2201.3" cy="758.8" r="3.5" fill="#cf4a12"/><circle cx="2193.7" cy="780.2" r="3.5" fill="#cf4a12"/><circle cx="2185.8" cy="785.8" r="3.5" fill="#cf4a12"/><circle cx="2290.3" cy="692.8" r="3.5" fill="#cf4a12"/><circle cx="2305.1" cy="689.6" r="3.5" fill="#cf4a12"/><circle cx="2349.6" cy="706.0" r="3.5" fill="#cf4a12"/><circle cx="2347.3" cy="758.8" r="3.5" fill="#cf4a12"/><circle cx="2353.9" cy="780.2" r="3.5" fill="#cf4a12"/><circle cx="2362.8" cy="785.8" r="3.5" fill="#cf4a12"/>
</svg>
<div class="a" style="left:0;top:0;width:1px;height:1905px;background:#5a5a5a"></div>
</div>

<div class="a" style="left:2905px;top:32px;width:495px;height:637px;background:#3d3d3f"></div>
<div class="a" style="left:3400px;top:32px;width:3px;height:1958px;background:#2d2d2d"></div>
<div class="a" style="left:2946px;top:42px;width:98px;height:33px;border:1px solid #8c8c8c;background:#3a3a3c"></div>
<div class="t" style="left:2946px;top:54.2px;width:98px;text-align:center;font-size:13.8px;transform:scaleX(0.92);color:#dedede">Add</div>
<div class="a" style="left:3056px;top:42px;width:99px;height:33px;border:1px solid #8c8c8c;background:#3a3a3c"></div>
<div class="t" style="left:3056px;top:54.2px;width:99px;text-align:center;font-size:13.8px;transform:scaleX(0.92);color:#6e6e6e">Copy</div>
<div class="a" style="left:3167px;top:42px;width:98px;height:33px;border:1px solid #8c8c8c;background:#3a3a3c"></div>
<div class="t" style="left:3167px;top:54.2px;width:98px;text-align:center;font-size:13.8px;transform:scaleX(0.92);color:#dedede">Assign</div>
<div class="a" style="left:3277px;top:42px;width:110px;height:33px;border:1px solid #8c8c8c;background:#3a3a3c"></div>
<div class="t" style="left:3277px;top:54.2px;width:110px;text-align:center;font-size:13.8px;transform:scaleX(0.92);color:#dedede">Delete Unused</div>
<div class="a" style="left:2918px;top:87px;width:470px;height:565px;background:#2d2d2d"></div>
<svg class="a" style="left:2948px;top:122px" width="16" height="16" viewBox="0 0 16 16"><path d="M2,8 L6,12 L14,3" stroke="#f5c400" stroke-width="3" fill="none"/></svg>
<div class="a" style="left:2983px;top:110px;width:43px;height:42px;background:#ffffff"></div>
<div class="t" style="left:3036px;top:125.7px;font-size:13.8px;color:#e9a91c;transform:scaleX(0.92);transform-origin:0 0;">FABRIC 1</div>
<div class="a" style="left:2929px;top:164px;width:446px;height:1px;background:#353535"></div>
<div class="a" style="left:3337px;top:118px;width:24px;height:24px;border:1px solid #222;background:#2f2f2f;border-radius:2px"></div>
<svg class="a" style="left:3341px;top:122px" width="16" height="16" viewBox="0 0 16 16"><rect x="1" y="3" width="14" height="12" fill="#8a8a8a"/><path d="M5,2 H11 V8 H13 L8,13 L3,8 H5 Z" fill="#3a3a3a"/><path d="M6,3 H10 V8 H11.5 L8,11.5 L4.5,8 H6 Z" fill="#c8c8c8"/></svg>
<div class="t" style="left:674.6px;top:13.2px;font-size:13.8px;color:#c8c8c8;transform:scaleX(0.92);transform-origin:0 0;">3D Window</div>
<div class="t" style="left:2104px;top:13.2px;font-size:13.8px;color:#c8c8c8;transform:scaleX(0.92);transform-origin:0 0;">2D Pattern Window</div>
<div class="t" style="left:3116px;top:13.2px;font-size:13.8px;color:#c8c8c8;transform:scaleX(0.92);transform-origin:0 0;">Fabric</div>
<div class="a" style="left:787px;top:9px;width:17px;height:17px;border:1px solid #1f1f1f;border-radius:3px;background:#2a2a2a"></div>
<svg class="a" style="left:791px;top:15px" width="9" height="6" viewBox="0 0 9 6"><path d="M0.5,0.5 H8.5 L4.5,5.5 Z" fill="#9a9a9a"/></svg>
<div class="a" style="left:2241px;top:9px;width:17px;height:17px;border:1px solid #1f1f1f;border-radius:3px;background:#2a2a2a"></div>
<svg class="a" style="left:2245px;top:15px" width="9" height="6" viewBox="0 0 9 6"><path d="M0.5,0.5 H8.5 L4.5,5.5 Z" fill="#9a9a9a"/></svg>
<div class="a" style="left:3217px;top:9px;width:17px;height:17px;border:1px solid #1f1f1f;border-radius:3px;background:#2a2a2a"></div>
<svg class="a" style="left:3221px;top:15px" width="9" height="6" viewBox="0 0 9 6"><path d="M0.5,0.5 H8.5 L4.5,5.5 Z" fill="#9a9a9a"/></svg>
<div class="a" style="left:1429px;top:9px;width:15px;height:15px;border:1px solid #1f1f1f;border-radius:2px;background:#2c2c2c"></div>
<svg class="a" style="left:1431px;top:11px" width="11" height="11" viewBox="0 0 11 11"><path d="M1,4 V10 H7 V7" stroke="#8e8e8e" stroke-width="1.6" fill="none"/><path d="M4,7 L10,1 M6.5,1 H10 V4.5" stroke="#8e8e8e" stroke-width="1.4" fill="none"/></svg>
<div class="a" style="left:2882px;top:9px;width:15px;height:15px;border:1px solid #1f1f1f;border-radius:2px;background:#2c2c2c"></div>
<svg class="a" style="left:2884px;top:11px" width="11" height="11" viewBox="0 0 11 11"><path d="M1,4 V10 H7 V7" stroke="#8e8e8e" stroke-width="1.6" fill="none"/><path d="M4,7 L10,1 M6.5,1 H10 V4.5" stroke="#8e8e8e" stroke-width="1.4" fill="none"/></svg>
<svg class="a" style="left:2907px;top:11px" width="12" height="11" viewBox="0 0 12 11"><path d="M0.5,3.5 H5 V0.5 L11,5.5 L5,10.5 V7.5 H0.5 Z" fill="#bdbdbd"/></svg>
<div class="a" style="left:2920px;top:9px;width:2px;height:15px;background:#151515"></div>
<div class="a" style="left:3365px;top:9px;width:15px;height:15px;border:1px solid #1f1f1f;border-radius:2px;background:#2c2c2c"></div>
<svg class="a" style="left:3367px;top:11px" width="11" height="11" viewBox="0 0 11 11"><path d="M1,4 V10 H7 V7" stroke="#8e8e8e" stroke-width="1.6" fill="none"/><path d="M4,7 L10,1 M6.5,1 H10 V4.5" stroke="#8e8e8e" stroke-width="1.4" fill="none"/></svg>
<div class="a" style="left:3383px;top:9px;width:15px;height:15px;border:1px solid #262626;border-radius:2px;background:#2c2c2c"></div>
<svg class="a" style="left:3385px;top:11px" width="11" height="11" viewBox="0 0 11 11"><path d="M2,2 L9,9 M9,2 L2,9" stroke="#9a9a9a" stroke-width="1.7"/></svg>
<div class="a" style="left:2905px;top:669px;width:495px;height:27px;background:#2b2b2b"></div>
<svg class="a" style="left:2908px;top:675px" width="12" height="11" viewBox="0 0 12 11"><path d="M0.5,3.5 H5 V0.5 L11,5.5 L5,10.5 V7.5 H0.5 Z" fill="#bdbdbd"/></svg>
<div class="a" style="left:2921px;top:673px;width:2px;height:15px;background:#151515"></div>
<div class="t" style="left:3091px;top:676.5px;font-size:14.6px;color:#c8c8c8;transform:scaleX(0.92);transform-origin:0 0;">Property Editor</div>
<div class="a" style="left:3216px;top:673px;width:17px;height:17px;border:1px solid #1f1f1f;border-radius:3px;background:#2a2a2a"></div>
<svg class="a" style="left:3220px;top:679px" width="9" height="6" viewBox="0 0 9 6"><path d="M0.5,0.5 H8.5 L4.5,5.5 Z" fill="#9a9a9a"/></svg>
<div class="a" style="left:3365px;top:674px;width:15px;height:15px;border:1px solid #1f1f1f;border-radius:2px;background:#2c2c2c"></div>
<svg class="a" style="left:3367px;top:676px" width="11" height="11" viewBox="0 0 11 11"><path d="M1,4 V10 H7 V7" stroke="#8e8e8e" stroke-width="1.6" fill="none"/><path d="M4,7 L10,1 M6.5,1 H10 V4.5" stroke="#8e8e8e" stroke-width="1.4" fill="none"/></svg>
<div class="a" style="left:3383px;top:674px;width:15px;height:15px;border:1px solid #262626;border-radius:2px;background:#2c2c2c"></div>
<svg class="a" style="left:3385px;top:676px" width="11" height="11" viewBox="0 0 11 11"><path d="M2,2 L9,9 M9,2 L2,9" stroke="#9a9a9a" stroke-width="1.7"/></svg>
<div class="a" style="left:2905px;top:696px;width:495px;height:1291px;background:#3d3d3f"></div>
<svg class="a" style="left:2922px;top:719.8px" width="10" height="6" viewBox="0 0 10 6"><path d="M0,0 H10 L5,6 Z" fill="#8a8a8a"/></svg>
<div class="t" style="left:2940px;top:714.5px;font-size:13.8px;color:#e9a91c;transform:scaleX(0.92);transform-origin:0 0;">Information</div>
<div class="a" style="left:2932px;top:735.5px;width:425px;height:1px;background:#353537"></div>
<div class="t" style="left:2945px;top:743.7px;font-size:13.8px;color:#cfcfcf;transform:scaleX(0.92);transform-origin:0 0;">Name</div>
<div class="a" style="left:3205px;top:739px;width:152px;height:23px;border:1px solid #4e4e50;background:#333335"></div>
<div class="t" style="left:3212px;top:742.7px;font-size:13.8px;color:#d8d8d8;transform:scaleX(0.92);transform-origin:0 0;">Pattern2D_468820</div>
<div class="a" style="left:2917px;top:764px;width:453px;height:1px;background:#353537"></div>
<svg class="a" style="left:2922px;top:778px" width="10" height="6" viewBox="0 0 10 6"><path d="M0,0 H10 L5,6 Z" fill="#8a8a8a"/></svg>
<div class="t" style="left:2940px;top:772.7px;font-size:13.8px;color:#e9a91c;transform:scaleX(0.92);transform-origin:0 0;">Selected Line</div>
<div class="a" style="left:2932px;top:793px;width:425px;height:1px;background:#353537"></div>
<div class="t" style="left:2945px;top:801.7px;font-size:13.8px;color:#cfcfcf;transform:scaleX(0.92);transform-origin:0 0;">2D Line Length</div>
<div class="a" style="left:3245px;top:797px;width:112px;height:22px;border:1px solid #4e4e50;background:#333335"></div>
<div class="t" style="left:3252px;top:800.2px;font-size:13.8px;color:#7a7a7a;transform:scaleX(0.92);transform-origin:0 0;">1734,4mm</div>
<div class="a" style="left:2932px;top:822px;width:425px;height:1px;background:#353537"></div>
<div class="t" style="left:2954px;top:830.2px;font-size:13.8px;color:#cfcfcf;transform:scaleX(0.92);transform-origin:0 0;">+ Symmetric Line Length</div>
<div class="a" style="left:3245px;top:825px;width:112px;height:22px;border:1px solid #4e4e50;background:#333335"></div>
<div class="t" style="left:3252px;top:828.2px;font-size:13.8px;color:#7a7a7a;transform:scaleX(0.92);transform-origin:0 0;">3468,8mm</div>
<div class="a" style="left:2932px;top:851px;width:425px;height:1px;background:#353537"></div>
<div class="t" style="left:2945px;top:858.7px;font-size:13.8px;color:#cfcfcf;transform:scaleX(0.92);transform-origin:0 0;">3D Line Length</div>
<div class="a" style="left:3245px;top:854px;width:112px;height:22px;border:1px solid #4e4e50;background:#333335"></div>
<div class="t" style="left:3252px;top:857.2px;font-size:13.8px;color:#7a7a7a;transform:scaleX(0.92);transform-origin:0 0;">1747,4mm</div>
<div class="a" style="left:2932px;top:879px;width:425px;height:1px;background:#353537"></div>
<div class="t" style="left:2954px;top:887.7px;font-size:13.8px;color:#cfcfcf;transform:scaleX(0.92);transform-origin:0 0;">+ Symmetric Line Length</div>
<div class="a" style="left:3245px;top:883px;width:112px;height:22px;border:1px solid #4e4e50;background:#333335"></div>
<div class="t" style="left:3252px;top:886.2px;font-size:13.8px;color:#7a7a7a;transform:scaleX(0.92);transform-origin:0 0;">3493,7mm</div>
<div class="a" style="left:2932px;top:908px;width:425px;height:1px;background:#353537"></div>
<div class="t" style="left:2945px;top:916.2px;font-size:13.8px;color:#cfcfcf;transform:scaleX(0.92);transform-origin:0 0;">Elastic</div>
<div class="a" style="left:3343px;top:917px;width:15px;height:15px;border-radius:3px;border:1.5px solid #5e5e60;background:#39393b"></div>
<div class="a" style="left:2932px;top:938px;width:425px;height:1px;background:#353537"></div>
<div class="t" style="left:2945px;top:945.3px;font-size:13.8px;color:#cfcfcf;transform:scaleX(0.92);transform-origin:0 0;">Seam Taping</div>
<div class="a" style="left:3343px;top:946px;width:15px;height:15px;border-radius:3px;border:1.5px solid #5e5e60;background:#39393b"></div>
<div class="a" style="left:2932px;top:967px;width:425px;height:1px;background:#353537"></div>
<svg class="a" style="left:2936px;top:979px" width="10" height="6" viewBox="0 0 10 6"><path d="M0,0 H10 L5,6 Z" fill="#8a8a8a"/></svg>
<div class="t" style="left:2954px;top:973.7px;font-size:13.8px;color:#cfcfcf;transform:scaleX(0.92);transform-origin:0 0;">Curved Side Geometry</div>
<div class="a" style="left:3343px;top:975px;width:15px;height:15px;border-radius:3px;background:#f6c400"></div>
<svg class="a" style="left:3345px;top:977px" width="11" height="11" viewBox="0 0 11 11"><path d="M1.5,5.5 L4.5,8.5 L10,1.5" stroke="#2a2a2a" stroke-width="1.8" fill="none"/></svg>
<div class="a" style="left:2946px;top:995px;width:411px;height:1px;background:#353537"></div>
<div class="t" style="left:2960px;top:1013.7px;font-size:13.8px;color:#cfcfcf;transform:scaleX(0.92);transform-origin:0 0;">Curvature (%)</div>
<div class="a" style="left:3245px;top:999px;width:112px;height:22px;border:1px solid #4e4e50;background:#333335"></div>
<div class="t" style="left:3252px;top:1002.2px;font-size:13.8px;color:#d8d8d8;transform:scaleX(0.92);transform-origin:0 0;">100</div>
<div class="a" style="left:3250px;top:1030px;width:102px;height:4px;background:#f4c414"></div>
<div class="a" style="left:3352px;top:1030px;width:5px;height:2px;background:#2a2a2a"></div>
<svg class="a" style="left:3347px;top:1025px" width="11" height="13" viewBox="0 0 11 13"><path d="M1,4 L5.5,0.5 L10,4 V12 H1 Z" fill="#c9c9c9" stroke="#3a3a3a" stroke-width="1"/></svg>
<div class="a" style="left:2946px;top:1046px;width:411px;height:1px;background:#353537"></div>
<div class="t" style="left:2960px;top:1053.7px;font-size:13.8px;color:#cfcfcf;transform:scaleX(0.92);transform-origin:0 0;">Double Sided</div>
<div class="a" style="left:3343px;top:1054px;width:15px;height:15px;border-radius:3px;border:1.5px solid #5e5e60;background:#39393b"></div>
<div class="a" style="left:2917px;top:1075px;width:453px;height:1px;background:#353537"></div>
<svg class="a" style="left:2922px;top:1088.5px" width="10" height="6" viewBox="0 0 10 6"><path d="M0,0 H10 L5,6 Z" fill="#8a8a8a"/></svg>
<div class="t" style="left:2940px;top:1083.2px;font-size:13.8px;color:#e9a91c;transform:scaleX(0.92);transform-origin:0 0;">Simulation Properties</div>
<div class="a" style="left:2932px;top:1104px;width:425px;height:1px;background:#353537"></div>
<div class="t" style="left:2945px;top:1112.2px;font-size:13.8px;color:#cfcfcf;transform:scaleX(0.92);transform-origin:0 0;">Particle Distance (mm)</div>
<div class="a" style="left:3245px;top:1108px;width:112px;height:22px;border:1px solid #4e4e50;background:#333335"></div>
<div class="t" style="left:3252px;top:1111.2px;font-size:13.8px;color:#d8d8d8;transform:scaleX(0.92);transform-origin:0 0;">20,0</div>
<div class="a" style="left:2932px;top:1133px;width:425px;height:1px;background:#353537"></div>
<div class="t" style="left:2945px;top:1140.7px;font-size:13.8px;color:#cfcfcf;transform:scaleX(0.92);transform-origin:0 0;">Layer</div>
<div class="a" style="left:3245px;top:1136px;width:112px;height:22px;border:1px solid #4e4e50;background:#333335"></div>
<div class="t" style="left:3252px;top:1139.2px;font-size:13.8px;color:#d8d8d8;transform:scaleX(0.92);transform-origin:0 0;">0</div>
<div class="a" style="left:2932px;top:1161px;width:425px;height:1px;background:#353537"></div>
<div class="t" style="left:2945px;top:1169.7px;font-size:13.8px;color:#cfcfcf;transform:scaleX(0.92);transform-origin:0 0;">Shrinkage Weft (%)</div>
<div class="a" style="left:3245px;top:1165px;width:112px;height:22px;border:1px solid #4e4e50;background:#333335"></div>
<div class="t" style="left:3252px;top:1168.2px;font-size:13.8px;color:#d8d8d8;transform:scaleX(0.92);transform-origin:0 0;">100,00</div>
<div class="a" style="left:2932px;top:1190px;width:425px;height:1px;background:#353537"></div>
<div class="t" style="left:2945px;top:1198.7px;font-size:13.8px;color:#cfcfcf;transform:scaleX(0.92);transform-origin:0 0;">Shrinkage Warp (%)</div>
<div class="a" style="left:3245px;top:1194px;width:112px;height:22px;border:1px solid #4e4e50;background:#333335"></div>
<div class="t" style="left:3252px;top:1197.2px;font-size:13.8px;color:#d8d8d8;transform:scaleX(0.92);transform-origin:0 0;">100,00</div>
<div class="a" style="left:2932px;top:1219px;width:425px;height:1px;background:#353537"></div>
<div class="t" style="left:2945px;top:1227.2px;font-size:13.8px;color:#cfcfcf;transform:scaleX(0.92);transform-origin:0 0;">Add'l Thickness - Collision (mm)</div>
<div class="a" style="left:3245px;top:1223px;width:112px;height:22px;border:1px solid #4e4e50;background:#333335"></div>
<div class="t" style="left:3252px;top:1226.2px;font-size:13.8px;color:#d8d8d8;transform:scaleX(0.92);transform-origin:0 0;">2,5</div>
<div class="a" style="left:2932px;top:1248px;width:425px;height:1px;background:#353537"></div>
<div class="t" style="left:2945px;top:1255.7px;font-size:13.8px;color:#cfcfcf;transform:scaleX(0.92);transform-origin:0 0;">Add'l Thickness - Rendering (mm)</div>
<div class="a" style="left:3245px;top:1251px;width:112px;height:22px;border:1px solid #4e4e50;background:#333335"></div>
<div class="t" style="left:3252px;top:1254.2px;font-size:13.8px;color:#d8d8d8;transform:scaleX(0.92);transform-origin:0 0;">0,0</div>
<div class="a" style="left:2932px;top:1276px;width:425px;height:1px;background:#353537"></div>
<svg class="a" style="left:2939px;top:1298px" width="6" height="10" viewBox="0 0 6 10"><path d="M0,0 V10 L6,5 Z" fill="#8a8a8a"/></svg>
<div class="t" style="left:2954px;top:1295.7px;font-size:13.8px;color:#cfcfcf;transform:scaleX(0.92);transform-origin:0 0;">Pressure</div>
<div class="a" style="left:3245px;top:1280px;width:112px;height:22px;border:1px solid #4e4e50;background:#333335"></div>
<div class="t" style="left:3252px;top:1283.2px;font-size:13.8px;color:#d8d8d8;transform:scaleX(0.92);transform-origin:0 0;">0</div>
<div class="a" style="left:3250px;top:1312px;width:54px;height:4px;background:#f4c414"></div>
<div class="a" style="left:3304px;top:1312px;width:53px;height:2px;background:#2a2a2a"></div>
<svg class="a" style="left:3299px;top:1307px" width="11" height="13" viewBox="0 0 11 13"><path d="M1,4 L5.5,0.5 L10,4 V12 H1 Z" fill="#c9c9c9" stroke="#3a3a3a" stroke-width="1"/></svg>
<div class="a" style="left:2917px;top:1328px;width:453px;height:1px;background:#353537"></div>
<svg class="a" style="left:2922px;top:1341.5px" width="10" height="6" viewBox="0 0 10 6"><path d="M0,0 H10 L5,6 Z" fill="#8a8a8a"/></svg>
<div class="t" style="left:2940px;top:1336.2px;font-size:13.8px;color:#e9a91c;transform:scaleX(0.92);transform-origin:0 0;">Fabric</div>
<div class="a" style="left:2932px;top:1357px;width:425px;height:1px;background:#353537"></div>
<div class="t" style="left:2945px;top:1364.7px;font-size:13.8px;color:#cfcfcf;transform:scaleX(0.92);transform-origin:0 0;">Fabric</div>
<div class="a" style="left:3221px;top:1360px;width:136px;height:23px;border:1px solid #4e4e50;background:#39393b"></div>
<div class="a" style="left:3228px;top:1362px;width:22px;height:19px;background:#ffffff"></div>
<div class="t" style="left:3261px;top:1363.7px;font-size:13.8px;color:#d8d8d8;transform:scaleX(0.92);transform-origin:0 0;">FABRIC 1</div>
<div class="a" style="left:3338px;top:1363px;width:16px;height:17px;border:1px solid #1f1f1f;border-radius:3px;background:#2a2a2a"></div>
<svg class="a" style="left:3342px;top:1369.5px" width="8" height="5" viewBox="0 0 8 5"><path d="M0,0 H8 L4,5 Z" fill="#9a9a9a"/></svg>
<div class="a" style="left:2932px;top:1386px;width:425px;height:1px;background:#353537"></div>
<div class="t" style="left:2945px;top:1393.7px;font-size:13.8px;color:#cfcfcf;transform:scaleX(0.92);transform-origin:0 0;">Grain Direction</div>
<div class="a" style="left:3245px;top:1390px;width:112px;height:22px;border:1px solid #4e4e50;background:#333335"></div>
<div class="t" style="left:3252px;top:1393.2px;font-size:13.8px;color:#d8d8d8;transform:scaleX(0.92);transform-origin:0 0;">0,0</div>
<div class="a" style="left:2917px;top:1414px;width:453px;height:1px;background:#353537"></div>
<svg class="a" style="left:2924px;top:1425px" width="6" height="10" viewBox="0 0 6 10"><path d="M0,0 V10 L6,5 Z" fill="#8a8a8a"/></svg>
<div class="t" style="left:2940px;top:1422.7px;font-size:13.8px;color:#e9a91c;transform:scaleX(0.92);transform-origin:0 0;">Bond/Skive</div>
<div class="a" style="left:2917px;top:1443px;width:453px;height:1px;background:#353537"></div>
<div class="t" style="left:2931px;top:1451.7px;font-size:13.8px;color:#e9a91c;transform:scaleX(0.92);transform-origin:0 0;">Solidify</div>
<div class="a" style="left:3343px;top:1452px;width:15px;height:15px;border-radius:3px;border:1.5px solid #5e5e60;background:#39393b"></div>
<div class="a" style="left:2917px;top:1472px;width:453px;height:1px;background:#353537"></div>
<svg class="a" style="left:2922px;top:1486px" width="10" height="6" viewBox="0 0 10 6"><path d="M0,0 H10 L5,6 Z" fill="#8a8a8a"/></svg>
<div class="t" style="left:2940px;top:1480.7px;font-size:13.8px;color:#e9a91c;transform:scaleX(0.92);transform-origin:0 0;">Arrangement</div>
<div class="a" style="left:2932px;top:1501px;width:425px;height:1px;background:#353537"></div>
<div class="t" style="left:2945px;top:1509.7px;font-size:13.8px;color:#cfcfcf;transform:scaleX(0.92);transform-origin:0 0;">Point Name</div>
<div class="a" style="left:3202px;top:1505px;width:155px;height:22px;border:1px solid #4e4e50;background:#39393b"></div>
<div class="t" style="left:3207px;top:1508.2px;font-size:13.8px;color:#d8d8d8;transform:scaleX(0.92);transform-origin:0 0;">Body_Front_3_L</div>
<div class="a" style="left:3338px;top:1508px;width:16px;height:16px;border:1px solid #1f1f1f;border-radius:3px;background:#2a2a2a"></div>
<svg class="a" style="left:3342px;top:1514.0px" width="8" height="5" viewBox="0 0 8 5"><path d="M0,0 H8 L4,5 Z" fill="#9a9a9a"/></svg>
<div class="a" style="left:2932px;top:1530px;width:425px;height:1px;background:#353537"></div>
<div class="t" style="left:2945px;top:1537.7px;font-size:13.8px;color:#cfcfcf;transform:scaleX(0.92);transform-origin:0 0;">Shape Style</div>
<div class="a" style="left:3221px;top:1534px;width:136px;height:22px;border:1px solid #4e4e50;background:#39393b"></div>
<div class="t" style="left:3226px;top:1537.2px;font-size:13.8px;color:#d8d8d8;transform:scaleX(0.92);transform-origin:0 0;">Curved</div>
<div class="a" style="left:3338px;top:1537px;width:16px;height:16px;border:1px solid #1f1f1f;border-radius:3px;background:#2a2a2a"></div>
<svg class="a" style="left:3342px;top:1543.0px" width="8" height="5" viewBox="0 0 8 5"><path d="M0,0 H8 L4,5 Z" fill="#9a9a9a"/></svg>
<div class="a" style="left:2932px;top:1559px;width:425px;height:1px;background:#353537"></div>
<div class="t" style="left:2945px;top:1577.7px;font-size:13.8px;color:#cfcfcf;transform:scaleX(0.92);transform-origin:0 0;">Position X</div>
<div class="a" style="left:3245px;top:1563px;width:112px;height:22px;border:1px solid #4e4e50;background:#333335"></div>
<div class="t" style="left:3252px;top:1566.2px;font-size:13.8px;color:#d8d8d8;transform:scaleX(0.92);transform-origin:0 0;">60</div>
<div class="a" style="left:3250px;top:1594px;width:63px;height:4px;background:#f4c414"></div>
<div class="a" style="left:3313px;top:1594px;width:44px;height:2px;background:#2a2a2a"></div>
<svg class="a" style="left:3308px;top:1589px" width="11" height="13" viewBox="0 0 11 13"><path d="M1,4 L5.5,0.5 L10,4 V12 H1 Z" fill="#c9c9c9" stroke="#3a3a3a" stroke-width="1"/></svg>
<div class="a" style="left:2932px;top:1610px;width:425px;height:1px;background:#353537"></div>
<div class="t" style="left:2945px;top:1628.7px;font-size:13.8px;color:#cfcfcf;transform:scaleX(0.92);transform-origin:0 0;">Position Y</div>
<div class="a" style="left:3245px;top:1614px;width:112px;height:22px;border:1px solid #4e4e50;background:#333335"></div>
<div class="t" style="left:3252px;top:1617.2px;font-size:13.8px;color:#d8d8d8;transform:scaleX(0.92);transform-origin:0 0;">55</div>
<div class="a" style="left:3250px;top:1645px;width:59px;height:4px;background:#f4c414"></div>
<div class="a" style="left:3309px;top:1645px;width:48px;height:2px;background:#2a2a2a"></div>
<svg class="a" style="left:3304px;top:1640px" width="11" height="13" viewBox="0 0 11 13"><path d="M1,4 L5.5,0.5 L10,4 V12 H1 Z" fill="#c9c9c9" stroke="#3a3a3a" stroke-width="1"/></svg>
<div class="a" style="left:2932px;top:1661px;width:425px;height:1px;background:#353537"></div>
<div class="t" style="left:2945px;top:1680.7px;font-size:13.8px;color:#cfcfcf;transform:scaleX(0.92);transform-origin:0 0;">Offset</div>
<div class="a" style="left:3245px;top:1666px;width:112px;height:22px;border:1px solid #4e4e50;background:#333335"></div>
<div class="t" style="left:3252px;top:1669.2px;font-size:13.8px;color:#d8d8d8;transform:scaleX(0.92);transform-origin:0 0;">50</div>
<div class="a" style="left:3250px;top:1697px;width:54px;height:4px;background:#f4c414"></div>
<div class="a" style="left:3304px;top:1697px;width:53px;height:2px;background:#2a2a2a"></div>
<svg class="a" style="left:3299px;top:1692px" width="11" height="13" viewBox="0 0 11 13"><path d="M1,4 L5.5,0.5 L10,4 V12 H1 Z" fill="#c9c9c9" stroke="#3a3a3a" stroke-width="1"/></svg>
<div class="a" style="left:2932px;top:1713px;width:425px;height:1px;background:#353537"></div>
<div class="t" style="left:2945px;top:1731.7px;font-size:13.8px;color:#cfcfcf;transform:scaleX(0.92);transform-origin:0 0;">Orientation</div>
<div class="a" style="left:3245px;top:1717px;width:112px;height:22px;border:1px solid #4e4e50;background:#333335"></div>
<div class="t" style="left:3252px;top:1720.2px;font-size:13.8px;color:#d8d8d8;transform:scaleX(0.92);transform-origin:0 0;">180</div>
<div class="a" style="left:3250px;top:1748px;width:54px;height:4px;background:#f4c414"></div>
<div class="a" style="left:3304px;top:1748px;width:53px;height:2px;background:#2a2a2a"></div>
<svg class="a" style="left:3299px;top:1743px" width="11" height="13" viewBox="0 0 11 13"><path d="M1,4 L5.5,0.5 L10,4 V12 H1 Z" fill="#c9c9c9" stroke="#3a3a3a" stroke-width="1"/></svg>
<div class="a" style="left:2932px;top:1764px;width:425px;height:1px;background:#353537"></div>
<svg class="a" style="left:2924px;top:1775px" width="6" height="10" viewBox="0 0 6 10"><path d="M0,0 V10 L6,5 Z" fill="#8a8a8a"/></svg>
<div class="t" style="left:2940px;top:1772.7px;font-size:13.8px;color:#e9a91c;transform:scaleX(0.92);transform-origin:0 0;">Miscellaneous</div>
<div class="a" style="left:2917px;top:1794px;width:453px;height:1px;background:#353537"></div>
<div class="t" style="left:2931px;top:1801.7px;font-size:13.8px;color:#e9a91c;transform:scaleX(0.92);transform-origin:0 0;">Remesh</div>
<div class="a" style="left:3343px;top:1802px;width:15px;height:15px;border-radius:3px;border:1.5px solid #5e5e60;background:#39393b"></div>
<svg class="a" style="left:1509px;top:2002px" width="15" height="14" viewBox="0 0 15 14"><path d="M7.5,0.5 L14.5,10.5 H0.5 Z" fill="#858585"/><rect x="0.5" y="11" width="14" height="3" fill="#262626"/></svg>
<svg class="a" style="left:3204px;top:1995px" width="26" height="27" viewBox="0 0 26 27"><rect x="1" y="1" width="24" height="24" rx="3" fill="none" stroke="#7a7a7a" stroke-width="1.8"/><rect x="2" y="1" width="22" height="3" fill="#7a7a7a"/></svg>
<svg class="a" style="left:3244px;top:1995px" width="26" height="27" viewBox="0 0 26 27"><rect x="1" y="1" width="10" height="24" rx="2.5" fill="none" stroke="#7a7a7a" stroke-width="1.8"/><rect x="14" y="1" width="11" height="24" rx="2.5" fill="none" stroke="#7a7a7a" stroke-width="1.8"/></svg>
<svg class="a" style="left:3283px;top:1995px" width="26" height="27" viewBox="0 0 26 27"><rect x="1" y="1" width="10" height="24" rx="2.5" fill="none" stroke="#7a7a7a" stroke-width="1.8"/><rect x="14" y="1" width="11" height="10" rx="2.5" fill="none" stroke="#7a7a7a" stroke-width="1.8"/><rect x="14" y="14" width="11" height="11" rx="2.5" fill="none" stroke="#7a7a7a" stroke-width="1.8"/></svg>
<svg class="a" style="left:3323px;top:1995px" width="26" height="27" viewBox="0 0 26 27"><rect x="1" y="1" width="10" height="10" rx="2.5" fill="none" stroke="#7a7a7a" stroke-width="1.8"/><rect x="14" y="1" width="11" height="10" rx="2.5" fill="none" stroke="#7a7a7a" stroke-width="1.8"/><rect x="1" y="14" width="10" height="11" rx="2.5" fill="none" stroke="#7a7a7a" stroke-width="1.8"/><rect x="14" y="14" width="11" height="11" rx="2.5" fill="none" stroke="#7a7a7a" stroke-width="1.8"/></svg>
<svg class="a" style="left:3362px;top:1995px" width="26" height="27" viewBox="0 0 26 27"><rect x="1" y="1" width="24" height="24" rx="3" fill="none" stroke="#7a7a7a" stroke-width="1.8"/><rect x="2" y="1" width="22" height="3" fill="#7a7a7a"/><path d="M17,14 A5,5 0 1 1 13,9" stroke="#7a7a7a" stroke-width="1.8" fill="none"/><path d="M13,6 L17,9 L13,12 Z" fill="#7a7a7a"/></svg>
<svg class="a" style="left:0;top:0" width="0" height="0"><defs><linearGradient id="gg" x1="0" y1="0" x2="0" y2="1"><stop offset="0" stop-color="#c4c4c4"/><stop offset="1" stop-color="#6e6e6e"/></linearGradient><linearGradient id="gsel" x1="0" y1="0" x2="0" y2="1"><stop offset="0" stop-color="#555557"/><stop offset="1" stop-color="#3a3a3c"/></linearGradient><linearGradient id="gyel" x1="0" y1="0" x2="1" y2="1"><stop offset="0" stop-color="#ffd400"/><stop offset="1" stop-color="#ff9a00"/></linearGradient></defs></svg>
<div class="a" style="left:7px;top:36px;width:1px;height:34px;background:#2c2c2c"></div>
<div class="a" style="left:64px;top:33px;width:41px;height:42px;border:1px solid #1a1a1a;background:linear-gradient(#58585a,#3c3c3e)"></div>
<svg class="a" style="left:66px;top:36px" width="36" height="36" viewBox="0 0 36 36"><path d="M4,3 L4,14 L7,11 L12,11 Z" fill="#a8a8a8"/><path d="M23,14 V33 M14,24 H32" stroke="#f2b400" stroke-width="2"/><path d="M23,12 L20,16 H26 Z M23,35 L20,31 H26 Z M12,24 L16,21 V27 Z M34,24 L30,21 V27 Z" fill="#f2b400"/></svg>
<svg class="a" style="left:16px;top:37px" width="40" height="40" viewBox="0 0 40 40"><g transform="translate(3,3)"><path d="M11,4 H19 V13 H25 L15,24 L5,13 H11 Z" fill="url(#gg)"/><g transform="translate(24,24)"><path d="M7,0 V7 H0 Z" fill="#5a5a5a"/></g></g></svg>
<svg class="a" style="left:113px;top:37px" width="40" height="40" viewBox="0 0 40 40"><g transform="translate(3,3)"><g transform="translate(-4,-4)"><path d="M0,0 L0,11 L3,8 L9,8 Z" fill="#9c9c9c"/></g><g transform="translate(3,2)"><circle cx="10" cy="13" r="7" fill="none" stroke="#8a8a8a" stroke-width="2" stroke-dasharray="2,2"/><path d="M9,22 L22,6 L25,9 L12,25 Z" fill="url(#gg)"/></g><g transform="translate(24,24)"><path d="M7,0 V7 H0 Z" fill="#5a5a5a"/></g></g></svg>
<svg class="a" style="left:161px;top:37px" width="40" height="40" viewBox="0 0 40 40"><g transform="translate(3,3)"><g transform="translate(-4,-4)"><path d="M0,0 L0,11 L3,8 L9,8 Z" fill="#9c9c9c"/></g><g transform="translate(3,2)"><path d="M7,5 L12,3 Q15,7 18,3 L23,5 L27,11 L23,14 V25 H7 V14 L3,11 Z" fill="url(#gg)"/><circle cx="7" cy="24" r="2" fill="#ddd"/><circle cx="23" cy="24" r="2" fill="#333"/></g><g transform="translate(24,24)"><path d="M7,0 V7 H0 Z" fill="#5a5a5a"/></g></g></svg>
<svg class="a" style="left:209px;top:37px" width="40" height="40" viewBox="0 0 40 40"><g transform="translate(3,3)"><g transform="translate(-4,-4)"><path d="M0,0 L0,11 L3,8 L9,8 Z" fill="#9c9c9c"/></g><g transform="translate(3,2)"><path d="M4,25 L21,6" stroke="#9a9a9a" stroke-width="1.6"/><circle cx="22" cy="5" r="3.2" fill="#d8d8d8"/></g><g transform="translate(24,24)"><path d="M7,0 V7 H0 Z" fill="#5a5a5a"/></g></g></svg>
<svg class="a" style="left:257px;top:37px" width="40" height="40" viewBox="0 0 40 40"><g transform="translate(3,3)"><path d="M3,8 L9,3 H14 V12 H6 Z M16,3 H21 L27,8 L24,12 H16 Z M6,14 H14 V24 H6 Z M16,14 H24 V24 H16 Z" fill="url(#gg)"/><g transform="translate(24,24)"><path d="M7,0 V7 H0 Z" fill="#5a5a5a"/></g></g></svg>
<svg class="a" style="left:304px;top:37px" width="40" height="40" viewBox="0 0 40 40"><g transform="translate(3,3)"><path d="M4,10 L11,5 V20 L4,25 Z M11,20 H25 L18,25 H4" fill="none" stroke="#7a7a7a" stroke-width="1.5"/><path d="M10,10 Q18,8 22,17" stroke="#bbb" stroke-width="2" fill="none"/><path d="M19,18 L24,15 L24,21 Z" fill="#ccc"/><g transform="translate(24,24)"><path d="M7,0 V7 H0 Z" fill="#5a5a5a"/></g></g></svg>
<svg class="a" style="left:352px;top:37px" width="40" height="40" viewBox="0 0 40 40"><g transform="translate(3,3)"><circle cx="15" cy="5" r="3" fill="#aaa"/><path d="M10,9 H20 L24,15 L21,16 L19,13 V20 L18,27 H12 L11,20 V13 L9,16 L6,15 Z" fill="url(#gg)"/><g transform="translate(24,24)"><path d="M7,0 V7 H0 Z" fill="#5a5a5a"/></g></g></svg>
<svg class="a" style="left:400px;top:37px" width="40" height="40" viewBox="0 0 40 40"><g transform="translate(3,3)"><g transform="translate(-4,-4)"><path d="M0,0 L0,11 L3,8 L9,8 Z" fill="#9c9c9c"/></g><g transform="translate(3,2)"><path d="M6,9 H22 V24 H8 V20 H13 V15 H6 Z" fill="url(#gg)"/><path d="M15,5 H18 V9 H15 Z" fill="#999"/></g><g transform="translate(24,24)"><path d="M7,0 V7 H0 Z" fill="#5a5a5a"/></g></g></svg>
<svg class="a" style="left:448px;top:37px" width="40" height="40" viewBox="0 0 40 40"><g transform="translate(3,3)"><g transform="translate(-4,-4)"><path d="M0,0 L0,11 L3,8 L9,8 Z" fill="#9c9c9c"/></g><g transform="translate(3,2)"><path d="M5,8 L25,6 L23,24 L3,25 Z M12,7 L10,25 M18,6.5 L16,24.5 M4,14 L24,12.5 M3.5,19.5 L23.5,18" stroke="#b0b0b0" stroke-width="1.4" fill="none"/></g><g transform="translate(24,24)"><path d="M7,0 V7 H0 Z" fill="#5a5a5a"/></g></g></svg>
<svg class="a" style="left:496px;top:37px" width="40" height="40" viewBox="0 0 40 40"><g transform="translate(3,3)"><g transform="translate(-4,-4)"><path d="M0,0 L0,11 L3,8 L9,8 Z" fill="#9c9c9c"/></g><g transform="translate(3,2)"><path d="M5,10 Q12,12 15,18 Q18,25 24,24" stroke="#999" stroke-width="1.6" fill="none"/><path d="M12,10 L20,8 L26,14 L20,20 Z" fill="#777"/></g><g transform="translate(24,24)"><path d="M7,0 V7 H0 Z" fill="#5a5a5a"/></g></g></svg>
<svg class="a" style="left:545px;top:37px" width="40" height="40" viewBox="0 0 40 40"><g transform="translate(3,3)"><g transform="translate(-4,-4)"><path d="M0,0 L0,11 L3,8 L9,8 Z" fill="#9c9c9c"/></g><g transform="translate(3,2)"><path d="M4,10 H14 V26 H4 Z" fill="#555"/><path d="M4,10 h3 v3 h-3z M10,13 h3 v3 h-3z M4,16 h3 v3 h-3z M10,19 h3 v3 h-3z M4,22 h3 v3 h-3z" fill="#ddd"/><path d="M14,8 Q22,6 22,12 V24 Q18,27 12,26" fill="url(#gg)"/></g><g transform="translate(24,24)"><path d="M7,0 V7 H0 Z" fill="#5a5a5a"/></g></g></svg>
<svg class="a" style="left:593px;top:37px" width="40" height="40" viewBox="0 0 40 40"><g transform="translate(3,3)"><g transform="translate(-4,-4)"><path d="M0,0 L0,11 L3,8 L9,8 Z" fill="#9c9c9c"/></g><g transform="translate(3,2)"><circle cx="15" cy="15" r="8" fill="url(#gg)"/><circle cx="12.5" cy="12.5" r="1.3" fill="#555"/><circle cx="17.5" cy="12.5" r="1.3" fill="#555"/><circle cx="12.5" cy="17.5" r="1.3" fill="#555"/><circle cx="17.5" cy="17.5" r="1.3" fill="#555"/></g><g transform="translate(24,24)"><path d="M7,0 V7 H0 Z" fill="#5a5a5a"/></g></g></svg>
<svg class="a" style="left:641px;top:37px" width="40" height="40" viewBox="0 0 40 40"><g transform="translate(3,3)"><rect x="6" y="8" width="18" height="20" fill="#555"/><path d="M15,6 V26" stroke="#bbb" stroke-width="3" stroke-dasharray="2,2"/><circle cx="15" cy="6" r="3" fill="none" stroke="#bbb" stroke-width="2"/><g transform="translate(24,24)"><path d="M7,0 V7 H0 Z" fill="#5a5a5a"/></g></g></svg>
<svg class="a" style="left:689px;top:37px" width="40" height="40" viewBox="0 0 40 40"><g transform="translate(3,3)"><g transform="translate(-4,-4)"><path d="M0,0 L0,11 L3,8 L9,8 Z" fill="#9c9c9c"/></g><g transform="translate(3,2)"><path d="M8,9 L22,7 V19 L8,20 Z" fill="url(#gg)"/><path d="M6,20 L23,22" stroke="#ddd" stroke-width="3"/></g><g transform="translate(24,24)"><path d="M7,0 V7 H0 Z" fill="#5a5a5a"/></g></g></svg>
<svg class="a" style="left:738px;top:37px" width="40" height="40" viewBox="0 0 40 40"><g transform="translate(3,3)"><g transform="translate(-4,-4)"><path d="M0,0 L0,11 L3,8 L9,8 Z" fill="#9c9c9c"/></g><g transform="translate(3,2)"><rect x="7" y="10" width="18" height="14" fill="url(#gg)"/></g><g transform="translate(24,24)"><path d="M7,0 V7 H0 Z" fill="#5a5a5a"/></g></g></svg>
<svg class="a" style="left:786px;top:37px" width="40" height="40" viewBox="0 0 40 40"><g transform="translate(3,3)"><path d="M2,15 H7 V12 L11,15 L7,18 V15" fill="#bbb"/><path d="M28,15 H23 V12 L19,15 L23,18 Z" fill="#bbb"/><path d="M12,4 V22 Q15,26 18,22 V4" stroke="#999" stroke-width="2.2" fill="none"/><g transform="translate(24,24)"><path d="M7,0 V7 H0 Z" fill="#5a5a5a"/></g></g></svg>
<svg class="a" style="left:834px;top:37px" width="40" height="40" viewBox="0 0 40 40"><g transform="translate(3,3)"><g transform="translate(-4,-4)"><path d="M0,0 L0,11 L3,8 L9,8 Z" fill="#9c9c9c"/></g><g transform="translate(3,2)"><path d="M6,18 Q15,28 26,22" stroke="#aaa" stroke-width="4" fill="none"/><path d="M14,10 L22,6" stroke="#999" stroke-width="2"/></g><g transform="translate(24,24)"><path d="M7,0 V7 H0 Z" fill="#5a5a5a"/></g></g></svg>
<svg class="a" style="left:882px;top:37px" width="40" height="40" viewBox="0 0 40 40"><g transform="translate(3,3)"><g transform="translate(-4,-4)"><path d="M0,0 L0,11 L3,8 L9,8 Z" fill="#9c9c9c"/></g><g transform="translate(3,2)"><circle cx="18" cy="5" r="3" fill="#999"/><path d="M15,9 L20,10 L24,15 L21,16 L19,13 L18,19 L22,27 L19,27 L15,21 L11,27 L8,26 L13,18 L14,12 L10,15 L8,14 Z" fill="url(#gg)"/></g><g transform="translate(24,24)"><path d="M7,0 V7 H0 Z" fill="#5a5a5a"/></g></g></svg>
<svg class="a" style="left:54px;top:14px" width="60" height="74" viewBox="0 0 60 74"><path d="M5,2 V12 M1,7 Q20,5 48,8 Q56,9 56,20 Q54,40 55,68 Q40,70 9,69 Q5,60 5,12" stroke="#e0202a" stroke-width="2.2" fill="none" stroke-linejoin="round"/></svg>
<div class="a" style="left:1462px;top:36px;width:1px;height:34px;background:#2c2c2c"></div>
<div class="a" style="left:1565px;top:33px;width:42px;height:42px;border:1px solid #1a1a1a;background:linear-gradient(#58585a,#3c3c3e)"></div>
<svg class="a" style="left:1569px;top:37px" width="34" height="34" viewBox="0 0 34 34"><circle cx="17" cy="16" r="9.5" fill="url(#gyel)"/><path d="M33,26 V33 H26 Z" fill="#5a5a5a"/></svg>
<svg class="a" style="left:1470px;top:37px" width="40" height="40" viewBox="0 0 40 40"><g transform="translate(3,3)"><g transform="translate(-4,-4)"><path d="M0,0 L0,11 L3,8 L9,8 Z" fill="#9c9c9c"/></g><g transform="translate(3,2)"><path d="M5,25 L25,5 V25 Z" fill="url(#gg)"/></g><g transform="translate(24,24)"><path d="M7,0 V7 H0 Z" fill="#5a5a5a"/></g></g></svg>
<svg class="a" style="left:1518px;top:37px" width="40" height="40" viewBox="0 0 40 40"><g transform="translate(3,3)"><g transform="translate(-4,-4)"><path d="M0,0 L0,11 L3,8 L9,8 Z" fill="#9c9c9c"/></g><g transform="translate(3,2)"><path d="M6,23 H22 V7 Z" fill="none" stroke="#888" stroke-width="1"/><circle cx="6" cy="23" r="2.2" fill="#ccc"/><circle cx="22" cy="23" r="2.2" fill="#ccc"/><circle cx="22" cy="7" r="2.2" fill="#ccc"/></g><g transform="translate(24,24)"><path d="M7,0 V7 H0 Z" fill="#5a5a5a"/></g></g></svg>
<svg class="a" style="left:1615px;top:37px" width="40" height="40" viewBox="0 0 40 40"><g transform="translate(3,3)"><rect x="3" y="5" width="24" height="20" fill="#6a6a6a"/><circle cx="15" cy="15" r="7" fill="none" stroke="#ccc" stroke-width="1.6"/><g transform="translate(24,24)"><path d="M7,0 V7 H0 Z" fill="#5a5a5a"/></g></g></svg>
<svg class="a" style="left:1665px;top:37px" width="40" height="40" viewBox="0 0 40 40"><g transform="translate(3,3)"><circle cx="13" cy="5" r="2.5" fill="#888"/><path d="M9,9 H17 V27 H10 Z" fill="#888"/><path d="M4,16 L9,11" stroke="#888" stroke-width="2"/><rect x="14" y="13" width="5" height="9" fill="#ddd"/><circle cx="21" cy="12" r="2" fill="#888"/><path d="M18,15 H24 V25 H19 Z" fill="#888"/><g transform="translate(24,24)"><path d="M7,0 V7 H0 Z" fill="#5a5a5a"/></g></g></svg>
<svg class="a" style="left:1712px;top:37px" width="40" height="40" viewBox="0 0 40 40"><g transform="translate(3,3)"><g transform="translate(-4,-4)"><path d="M0,0 L0,11 L3,8 L9,8 Z" fill="#9c9c9c"/></g><g transform="translate(3,2)"><path d="M6,9 H22 V24 H8 V20 H13 V15 H6 Z" fill="url(#gg)"/><path d="M15,5 H18 V9 H15 Z" fill="#999"/></g><g transform="translate(24,24)"><path d="M7,0 V7 H0 Z" fill="#5a5a5a"/></g></g></svg>
<svg class="a" style="left:1761px;top:37px" width="40" height="40" viewBox="0 0 40 40"><g transform="translate(3,3)"><g transform="translate(-4,-4)"><path d="M0,0 L0,11 L3,8 L9,8 Z" fill="#9c9c9c"/></g><g transform="translate(3,2)"><path d="M5,8 L25,6 L23,24 L3,25 Z M12,7 L10,25 M18,6.5 L16,24.5 M4,14 L24,12.5 M3.5,19.5 L23.5,18" stroke="#b0b0b0" stroke-width="1.4" fill="none"/></g><g transform="translate(24,24)"><path d="M7,0 V7 H0 Z" fill="#5a5a5a"/></g></g></svg>
<svg class="a" style="left:1808px;top:37px" width="40" height="40" viewBox="0 0 40 40"><g transform="translate(3,3)"><path d="M3,22 Q6,10 16,9 H24 Q27,16 26,22 Z" fill="url(#gg)"/><rect x="2" y="24" width="26" height="2" fill="#555"/></g></svg>
<svg class="a" style="left:1855px;top:37px" width="40" height="40" viewBox="0 0 40 40"><g transform="translate(3,3)"><g transform="translate(-4,-4)"><path d="M0,0 L0,11 L3,8 L9,8 Z" fill="#9c9c9c"/></g><g transform="translate(3,2)"><path d="M7,5 L12,3 Q15,7 18,3 L23,5 L28,12 L23,15 V26 H7 V15 L2,12 Z" fill="#888"/></g><g transform="translate(24,24)"><path d="M7,0 V7 H0 Z" fill="#5a5a5a"/></g></g></svg>
<svg class="a" style="left:1902px;top:37px" width="40" height="40" viewBox="0 0 40 40"><g transform="translate(3,3)"><g transform="translate(-4,-4)"><path d="M0,0 L0,11 L3,8 L9,8 Z" fill="#9c9c9c"/></g><g transform="translate(3,2)"><path d="M4,10 H14 V26 H4 Z" fill="#555"/><path d="M4,10 h3 v3 h-3z M10,13 h3 v3 h-3z M4,16 h3 v3 h-3z M10,19 h3 v3 h-3z M4,22 h3 v3 h-3z" fill="#ddd"/><path d="M14,8 Q22,6 22,12 V24 Q18,27 12,26" fill="url(#gg)"/></g><g transform="translate(24,24)"><path d="M7,0 V7 H0 Z" fill="#5a5a5a"/></g></g></svg>
<svg class="a" style="left:1952px;top:37px" width="40" height="40" viewBox="0 0 40 40"><g transform="translate(3,3)"><path d="M4,6 L11,9 V27 L4,24 Z M12,9 L19,6 V24 L12,27 Z M20,6 L27,9 V27 L20,24 Z" fill="url(#gg)"/><g transform="translate(24,24)"><path d="M7,0 V7 H0 Z" fill="#5a5a5a"/></g></g></svg>
<svg class="a" style="left:1999px;top:37px" width="40" height="40" viewBox="0 0 40 40"><g transform="translate(3,3)"><g transform="translate(-4,-4)"><path d="M0,0 L0,11 L3,8 L9,8 Z" fill="#9c9c9c"/></g><g transform="translate(3,2)"><path d="M5,25 L25,5" stroke="#ddd" stroke-width="3" stroke-dasharray="4,2"/></g><g transform="translate(24,24)"><path d="M7,0 V7 H0 Z" fill="#5a5a5a"/></g></g></svg>
<svg class="a" style="left:2047px;top:37px" width="40" height="40" viewBox="0 0 40 40"><g transform="translate(3,3)"><path d="M7,5 L12,3 Q15,7 18,3 L23,5 L28,12 L23,15 V26 H7 V15 L2,12 Z" fill="#888"/></g></svg>
<svg class="a" style="left:15px;top:93px" width="23" height="23" viewBox="0 0 23 23"><path d="M5,10 L13,6 L20,9 V16 L12,20 L5,17 Z" fill="#8a8a8a"/><path d="M5,10 L12,13 V20" stroke="#ccc" stroke-width="1.5" fill="none"/></svg>
<div class="a" style="left:47px;top:92px;width:25px;height:25px;border:1px solid rgba(120,120,120,0.45);background:rgba(255,255,255,0.08)"></div>
<svg class="a" style="left:48px;top:93px" width="23" height="23" viewBox="0 0 23 23"><path d="M4,6 L9,4 Q11.5,7 14,4 L19,6 L22,10 L19,12 V20 H6 V12 L2,10 Z" fill="#eee"/><path d="M2,19 Q6,15 10,19 Q6,22 2,19 Z" fill="#222"/></svg>
<div class="a" style="left:79px;top:92px;width:25px;height:25px;border:1px solid rgba(120,120,120,0.45);background:rgba(255,255,255,0.08)"></div>
<svg class="a" style="left:80px;top:93px" width="23" height="23" viewBox="0 0 23 23"><circle cx="12" cy="4" r="2.2" fill="#f5b800"/><circle cx="18" cy="8" r="2.2" fill="#f5b800"/><circle cx="19" cy="15" r="2.2" fill="#f5b800"/><circle cx="14" cy="19" r="2.2" fill="#f5b800"/><circle cx="6" cy="9" r="2.2" fill="#f5b800"/><circle cx="4" cy="16" r="1.8" fill="#f5b800"/></svg>
<div class="a" style="left:111px;top:92px;width:25px;height:25px;border:1px solid rgba(120,120,120,0.45);background:rgba(255,255,255,0.08)"></div>
<svg class="a" style="left:112px;top:93px" width="23" height="23" viewBox="0 0 23 23"><circle cx="12" cy="7" r="4" fill="#ddd"/><path d="M5,21 Q6,12 12,12 Q18,12 19,21 Z" fill="#ccc"/><path d="M2,19 Q6,15 10,19 Q6,22 2,19 Z" fill="#222"/></svg>
<div class="a" style="left:144px;top:92px;width:25px;height:25px;border:1px solid rgba(120,120,120,0.45);background:rgba(255,255,255,0.08)"></div>
<svg class="a" style="left:145px;top:93px" width="23" height="23" viewBox="0 0 23 23"><path d="M5,8 H15 V20 H5 Z" fill="#eee"/><path d="M9,5 L20,4 L18,17 L7,19 Z" fill="#f5a800"/></svg>
<div class="a" style="left:176px;top:92px;width:25px;height:25px;border:1px solid rgba(120,120,120,0.45);background:rgba(255,255,255,0.08)"></div>
<svg class="a" style="left:177px;top:93px" width="23" height="23" viewBox="0 0 23 23"><path d="M5,8 L16,5 L20,9 L18,19 L7,19 Z" fill="#666"/><path d="M10,6 L19,4 L18,14" fill="#bbb"/></svg>
<div class="a" style="left:208px;top:92px;width:25px;height:25px;border:1px solid rgba(120,120,120,0.45);background:rgba(255,255,255,0.08)"></div>
<svg class="a" style="left:209px;top:93px" width="23" height="23" viewBox="0 0 23 23"><path d="M7,20 Q6,12 8,8 Q12,3 16,8 Q18,12 17,20 Z" fill="#f7c498" stroke="#d09060" stroke-width="1"/></svg>
<div class="a" style="left:240px;top:92px;width:25px;height:25px;border:1px solid rgba(120,120,120,0.45);background:rgba(255,255,255,0.08)"></div>
<svg class="a" style="left:241px;top:93px" width="23" height="23" viewBox="0 0 23 23"><circle cx="13" cy="11" r="8" fill="#f5a800"/><path d="M2,19 Q6,15 10,19 Q6,22 2,19 Z" fill="#222"/></svg>
<svg class="a" style="left:274px;top:93px" width="23" height="23" viewBox="0 0 23 23"><path d="M11,2 L6,8 H9 V12 H13 V8 H16 Z" fill="#8a8a8a"/><path d="M2,13 H21 V20 H2 Z" fill="#7a7a7a"/><path d="M4,15 H19" stroke="#aaa" stroke-width="1" stroke-dasharray="1,2"/></svg>
<div class="a" style="left:1468px;top:92px;width:25px;height:25px;border:1px solid rgba(160,160,160,0.5);background:rgba(255,255,255,0.25)"></div>
<svg class="a" style="left:1469px;top:93px" width="23" height="23" viewBox="0 0 23 23"><path d="M4,5 L21,18 L19,20 L3,8 Z" fill="#333"/><path d="M4,5 Q2,10 4,16" stroke="#f5a800" stroke-width="1.2" fill="none"/><path d="M2,19 Q6,15 10,19 Q6,22 2,19 Z" fill="#222"/></svg>
<div class="a" style="left:1500px;top:92px;width:25px;height:25px;border:1px solid rgba(160,160,160,0.5);background:rgba(255,255,255,0.25)"></div>
<svg class="a" style="left:1501px;top:93px" width="23" height="23" viewBox="0 0 23 23"><path d="M4,6 L9,4 Q11.5,7 14,4 L19,6 L22,10 L19,12 V20 H6 V12 L2,10 Z" fill="#fff"/><path d="M2,19 Q6,15 10,19 Q6,22 2,19 Z" fill="#222"/></svg>
<div class="a" style="left:1533px;top:92px;width:25px;height:25px;border:1px solid rgba(160,160,160,0.5);background:rgba(255,255,255,0.25)"></div>
<svg class="a" style="left:1534px;top:93px" width="23" height="23" viewBox="0 0 23 23"><circle cx="13" cy="11" r="9" fill="#333"/><path d="M13,6 V8 M12,10 H14 V17" stroke="#f5a800" stroke-width="2"/><path d="M2,19 Q6,15 10,19 Q6,22 2,19 Z" fill="#222"/></svg>
<div class="a" style="left:1565px;top:92px;width:25px;height:25px;border:1px solid rgba(160,160,160,0.5);background:rgba(255,255,255,0.25)"></div>
<svg class="a" style="left:1566px;top:93px" width="23" height="23" viewBox="0 0 23 23"><path d="M5,8 H15 V20 H5 Z" fill="#eee"/><path d="M9,5 L21,4 L18,17 L7,19 Z" fill="#f5a000"/></svg>
<div class="a" style="left:1598px;top:92px;width:25px;height:25px;border:1px solid rgba(160,160,160,0.5);background:rgba(255,255,255,0.15)"></div>
<svg class="a" style="left:1599px;top:93px" width="23" height="23" viewBox="0 0 23 23"><path d="M4,6 L9,4 Q11.5,7 14,4 L19,6 L22,10 L19,12 V20 H6 V12 L2,10 Z" fill="#aaa"/><rect x="4" y="15" width="5" height="6" fill="#999"/></svg>
<svg class="a" style="left:1631px;top:93px" width="23" height="23" viewBox="0 0 23 23"><path d="M11,2 L6,8 H9 V12 H13 V8 H16 Z" fill="#8a8a8a"/><path d="M2,13 H21 V20 H2 Z" fill="#7a7a7a"/></svg>
</body></html>
